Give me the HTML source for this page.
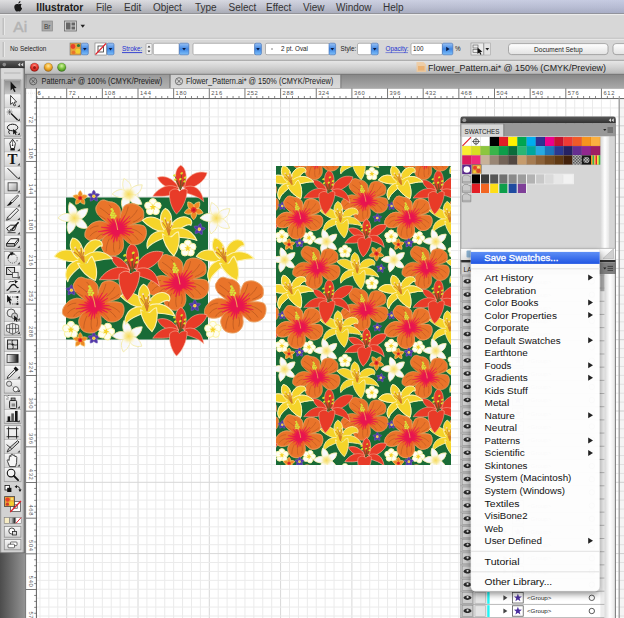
<!DOCTYPE html>
<html><head><meta charset="utf-8"><title>Illustrator</title>
<style>
html,body{margin:0;padding:0}
body{width:624px;height:618px;overflow:hidden;position:relative;background:#fff;font-family:"Liberation Sans","DejaVu Sans",sans-serif;font-size:10px;color:#111}
.abs{position:absolute}
svg{position:absolute;left:0;top:0}
</style></head><body>
<svg width="624" height="618" viewBox="0 0 624 618" font-family="Liberation Sans, DejaVu Sans, sans-serif"><defs><radialGradient id="hibg"><stop offset="0" stop-color="#ee3a22"/><stop offset=".5" stop-color="#ee4322" stop-opacity=".7"/><stop offset="1" stop-color="#ee5a22" stop-opacity="0"/></radialGradient><radialGradient id="hibg2" gradientUnits="userSpaceOnUse" cx="0" cy="0" r="18"><stop offset="0" stop-color="#e8134f"/><stop offset=".7" stop-color="#e8174f"/><stop offset="1" stop-color="#ea2a45" stop-opacity=".85"/></radialGradient><radialGradient id="plg"><stop offset="0" stop-color="#f6d95a"/><stop offset=".45" stop-color="#f9e88f" stop-opacity=".8"/><stop offset="1" stop-color="#fff" stop-opacity="0"/></radialGradient><g id="hib"><path d="M0,0 C-6,-4 -12,-8 -18,-8 C-23,-7.5 -27,-5 -29,-2 C-32,1 -33,5 -32,8 C-30,11 -26,12.5 -22,12 C-17,12 -9,7 0,0Z" fill="#e9742a" stroke="#f4cf94" stroke-width=".7" stroke-linejoin="round"/><path d="M0,0 C3,4 6,8 6,12 C7,17 6,21 3,24 C0,27 -5,27.5 -9,26 C-13,25 -15,21 -16,17 C-17,12 -13,5 0,0Z" fill="#e9742a" stroke="#f4cf94" stroke-width=".7" stroke-linejoin="round"/><path d="M0,0 C8,-4 20,-6 27,-3 C30,0 30,6 27,11 C24,15 18,17 13,15 C8,12 3,6 0,0Z" fill="#e9742a" stroke="#f4cf94" stroke-width=".7" stroke-linejoin="round"/><path d="M0,0 C1,-6 3,-16 7,-23 C11,-26 16,-26 20,-24 C24,-22 27,-19 26.5,-15 C27,-12 26,-9 24,-8 C18,-5 8,-3 0,0Z" fill="#e9742a" stroke="#f4cf94" stroke-width=".7" stroke-linejoin="round"/><path d="M0,0 C-6,-4 -14,-8 -19,-14 C-22,-18 -22,-22 -20,-24 C-18,-28 -16,-29 -13,-29 C-10,-28 -8,-27 -5,-27 C-1,-26 2,-23 3,-20 C4,-14 2,-6 0,0Z" fill="#e9742a" stroke="#f4cf94" stroke-width=".7" stroke-linejoin="round"/><path d="M0,0 C-6,-4 -12,-8 -18,-8 C-23,-7.5 -27,-5 -29,-2 C-32,1 -33,5 -32,8 C-30,11 -26,12.5 -22,12 C-17,12 -9,7 0,0Z" fill="none" stroke="#d9601c" stroke-width=".35"/><path d="M0,0 C3,4 6,8 6,12 C7,17 6,21 3,24 C0,27 -5,27.5 -9,26 C-13,25 -15,21 -16,17 C-17,12 -13,5 0,0Z" fill="none" stroke="#d9601c" stroke-width=".35"/><path d="M0,0 C8,-4 20,-6 27,-3 C30,0 30,6 27,11 C24,15 18,17 13,15 C8,12 3,6 0,0Z" fill="none" stroke="#d9601c" stroke-width=".35"/><path d="M0,0 C1,-6 3,-16 7,-23 C11,-26 16,-26 20,-24 C24,-22 27,-19 26.5,-15 C27,-12 26,-9 24,-8 C18,-5 8,-3 0,0Z" fill="none" stroke="#d9601c" stroke-width=".35"/><path d="M0,0 C-6,-4 -14,-8 -19,-14 C-22,-18 -22,-22 -20,-24 C-18,-28 -16,-29 -13,-29 C-10,-28 -8,-27 -5,-27 C-1,-26 2,-23 3,-20 C4,-14 2,-6 0,0Z" fill="none" stroke="#d9601c" stroke-width=".35"/><path d="M-20,2 C-23,3 -26,5 -27,7" fill="none" stroke="#b4531d" stroke-width=".65" stroke-linecap="round"/><path d="M-15,5 C-18,6 -20,8 -21,10" fill="none" stroke="#b4531d" stroke-width=".65" stroke-linecap="round"/><path d="M-19,-3 C-22,-3 -25,-2 -27,0" fill="none" stroke="#b4531d" stroke-width=".65" stroke-linecap="round"/><path d="M-8,10 C-10,14 -11,18 -11,22" fill="none" stroke="#b4531d" stroke-width=".65" stroke-linecap="round"/><path d="M-3,12 C-4,16 -4,20 -3,23" fill="none" stroke="#b4531d" stroke-width=".65" stroke-linecap="round"/><path d="M2,11 C3,14 3,17 2,20" fill="none" stroke="#b4531d" stroke-width=".65" stroke-linecap="round"/><path d="M12,3 C16,5 19,8 21,11" fill="none" stroke="#b4531d" stroke-width=".65" stroke-linecap="round"/><path d="M15,0 C19,1 22,3 25,6" fill="none" stroke="#b4531d" stroke-width=".65" stroke-linecap="round"/><path d="M8,6 C11,9 13,11 14,13" fill="none" stroke="#b4531d" stroke-width=".65" stroke-linecap="round"/><path d="M12,-10 C15,-12 18,-15 20,-19" fill="none" stroke="#b4531d" stroke-width=".65" stroke-linecap="round"/><path d="M16,-7 C19,-8 22,-10 24,-12" fill="none" stroke="#b4531d" stroke-width=".65" stroke-linecap="round"/><path d="M7,-12 C9,-15 10,-18 11,-22" fill="none" stroke="#b4531d" stroke-width=".65" stroke-linecap="round"/><path d="M-8,-14 C-11,-17 -14,-19 -17,-21" fill="none" stroke="#b4531d" stroke-width=".65" stroke-linecap="round"/><path d="M-3,-16 C-4,-19 -6,-22 -8,-24" fill="none" stroke="#b4531d" stroke-width=".65" stroke-linecap="round"/><path d="M-12,-10 C-15,-12 -17,-13 -19,-14" fill="none" stroke="#b4531d" stroke-width=".65" stroke-linecap="round"/><ellipse rx="17" ry="14" fill="url(#hibg)"/><polygon points="-5.4,-2.6 -8.0,-5.3 -4.6,-3.9 -4.6,-3.9 -9.7,-10.6 -3.5,-4.9 -3.5,-4.9 -7.9,-14.9 -2.1,-5.6 -2.1,-5.6 -3.5,-14.3 -0.7,-6.0 -0.7,-6.0 0.1,-10.5 0.8,-5.9 0.9,-5.9 3.0,-10.8 2.3,-5.5 2.3,-5.5 7.7,-13.5 3.6,-4.8 3.6,-4.8 12.5,-12.9 4.7,-3.8 4.7,-3.8 13.2,-8.2 5.5,-2.5 5.5,-2.5 9.6,-3.0 5.9,-1.1 5.5,-2.4 10.1,-3.0 5.9,-1.0 5.9,-1.0 14.7,-0.6 6.0,0.5 6.0,0.5 16.6,3.5 5.7,2.0 5.7,2.0 12.9,6.4 5.0,3.3 5.0,3.3 7.6,6.5 4.0,4.4 2.0,5.6 1.7,7.7 0.6,6.0 0.6,6.0 -0.4,12.3 -0.9,5.9 -0.9,5.9 -3.9,13.4 -2.4,5.5 -2.4,5.5 -6.1,10.4 -3.7,4.8 -3.7,4.8 -5.4,5.4 -4.7,3.7 -4.3,4.2 -9.0,6.7 -5.2,3.0 -5.2,3.0 -14.9,6.1 -5.8,1.6 -5.8,1.6 -19.1,2.7 -6.0,0.1 -6.0,0.1 -16.1,-1.8 -5.8,-1.4 -5.8,-1.4 -10.3,-3.9 -5.3,-2.8" fill="url(#hibg2)" stroke="#e8174f" stroke-width=".5" stroke-linejoin="round"/><path d="M0.5,1 C0,-4 -1.5,-8 -2.8,-11.5" stroke="#eea052" stroke-width="1.1" fill="none"/><circle cx="-3" cy="-11.5" r="1.25" fill="#dbe23a"/><circle cx="-5.5" cy="-11.5" r="1.25" fill="#dbe23a"/><circle cx="-1.8" cy="-13.2" r="1.25" fill="#dbe23a"/><circle cx="-4.3" cy="-13.6" r="1.25" fill="#dbe23a"/><circle cx="-6.2" cy="-13.8" r="1.25" fill="#dbe23a"/><circle cx="-3.2" cy="-15.6" r="1.25" fill="#dbe23a"/><circle cx="-5.4" cy="-16" r="1.25" fill="#dbe23a"/><circle cx="-4.4" cy="-18" r="1.25" fill="#dbe23a"/><circle cx="-5.4" cy="-19.8" r="1.25" fill="#dbe23a"/></g><g id="yl"><path d="M-3,0 C-10,-1 -19,-5 -25.5,-12 C-18,-18.5 -7,-15 -1,-5Z" fill="#f5d42a" stroke="#fcf2b4" stroke-width="1.1" stroke-linejoin="round"/><path d="M1,-3 C5,-13 14,-18 20.5,-14.5 C23.5,-13.5 25,-10 23,-7 C20.5,-10.5 13,-3.5 4,1Z" fill="#f5d42a" stroke="#fcf2b4" stroke-width="1.1" stroke-linejoin="round"/><path d="M-2,-1 C-8,-2.5 -16,0 -19,6 C-21,9 -21.5,12 -20.5,16 C-17,10 -10,8.5 -3,5Z" fill="#f5d42a" stroke="#fcf2b4" stroke-width="1.1" stroke-linejoin="round"/><path d="M2,-2 C10,-6.5 23,-5 29,8 C22,5 12,5.5 4,4Z" fill="#f5d42a" stroke="#fcf2b4" stroke-width="1.1" stroke-linejoin="round"/><path d="M-4,-3 C-9,-10 -8.5,-20 -2.5,-24 C4,-21 5,-12 3,-4Z" fill="#f5d42a" stroke="#fcf2b4" stroke-width="1.1" stroke-linejoin="round"/><path d="M-5.5,1.5 C-2,3 2,5 4,4 C6,2 8,-0.5 10.5,-0.5 C12.5,8 10.5,18 6,23.5 C0,18 -4.5,10 -5.5,1.5Z" fill="#f5d42a" stroke="#fcf2b4" stroke-width="1.1" stroke-linejoin="round"/><circle cx="0.5" cy="0" r="4.5" fill="#f5d42a"/><path d="M1,2 Q-1.8,-6.6 -6,-11" stroke="#cf7a2b" stroke-width="1" fill="none"/><path d="M1,2 Q-0.9,-8.4 -3,-14" stroke="#cf7a2b" stroke-width="1" fill="none"/><path d="M1,2 Q0.0,-6.0 0,-10" stroke="#cf7a2b" stroke-width="1" fill="none"/><path d="M1,2 Q0.9,-7.8 3,-13" stroke="#cf7a2b" stroke-width="1" fill="none"/><path d="M1,2 Q1.3,-4.8 4.5,-8" stroke="#cf7a2b" stroke-width="1" fill="none"/><path d="M-1,-3 L3,-3 L1.5,3 L0.5,3Z" fill="#cf7a2b"/><circle cx="-6" cy="-11" r="1.1" fill="#f6dcb4"/><circle cx="-3" cy="-14" r="1.1" fill="#f6dcb4"/><circle cx="0" cy="-10" r="1.1" fill="#f6dcb4"/><circle cx="3" cy="-13" r="1.1" fill="#f6dcb4"/><circle cx="4.5" cy="-8" r="1.1" fill="#f6dcb4"/></g><g id="rl"><path d="M-3,-2 C-9,-12 -19,-17 -28,-13.5 C-25,-5 -14,0 -4,2Z" fill="#e83b28" stroke="#f8b9a0" stroke-width=".7" stroke-linejoin="round"/><path d="M2,-3 C7,-15 18,-23 30.5,-19 C28,-9 17,-2 5,1Z" fill="#e83b28" stroke="#f8b9a0" stroke-width=".7" stroke-linejoin="round"/><path d="M-3,-1 C-12,-7 -25,-4 -33.5,8.5 C-26,8 -18,10 -8,6Z" fill="#e83b28" stroke="#f8b9a0" stroke-width=".7" stroke-linejoin="round"/><path d="M4,-2 C13,-6 24,-2 26.5,15 C21,9 13,7 4,4Z" fill="#e83b28" stroke="#f8b9a0" stroke-width=".7" stroke-linejoin="round"/><path d="M-4,-2 C-8,-12 -8,-24 -0.5,-28 C7,-24 7,-12 4,-3Z" fill="#e83b28" stroke="#f8b9a0" stroke-width=".7" stroke-linejoin="round"/><path d="M-13.5,3 C-9,-1 -5,-1 -2,2.5 C1,0 4,-1 7,1 C7,12 1,24 -5.5,29.5 C-11,24 -15,12 -13.5,3Z" fill="#e83b28" stroke="#f8b9a0" stroke-width=".7" stroke-linejoin="round"/><path d="M-1,1 Q-3.2,-8.0 -8,-16" stroke="#6a5320" stroke-width=".9" fill="none"/><path d="M-1,1 Q-2.8,-5.5 -7,-11" stroke="#6a5320" stroke-width=".9" fill="none"/><path d="M-1,1 Q0.2,-9.2 0.5,-18.5" stroke="#6a5320" stroke-width=".9" fill="none"/><path d="M-1,1 Q-0.4,-5.8 -1,-11.5" stroke="#6a5320" stroke-width=".9" fill="none"/><path d="M-1,1 Q1.8,-6.8 4.5,-13.5" stroke="#6a5320" stroke-width=".9" fill="none"/><path d="M-1,1 Q1.6,-4.5 4,-9" stroke="#6a5320" stroke-width=".9" fill="none"/><ellipse cx="-8" cy="-16" rx="1.7" ry="1.2" fill="#dbe12c" transform="rotate(-30 -8 -16)"/><ellipse cx="-7" cy="-11" rx="1.7" ry="1.2" fill="#dbe12c" transform="rotate(-30 -7 -11)"/><ellipse cx="0.5" cy="-18.5" rx="1.7" ry="1.2" fill="#dbe12c" transform="rotate(-30 0.5 -18.5)"/><ellipse cx="-1" cy="-11.5" rx="1.7" ry="1.2" fill="#dbe12c" transform="rotate(-30 -1 -11.5)"/><ellipse cx="4.5" cy="-13.5" rx="1.7" ry="1.2" fill="#dbe12c" transform="rotate(-30 4.5 -13.5)"/><ellipse cx="4" cy="-9" rx="1.7" ry="1.2" fill="#dbe12c" transform="rotate(-30 4 -9)"/></g><g id="rls"><path d="M-3,-2 C-8,-11 -15,-16 -22,-15 C-20,-7 -13,-1 -4,2Z" fill="#e83b28" stroke="#f8b9a0" stroke-width=".7" stroke-linejoin="round"/><path d="M2,-3 C7,-15 18,-23 30.5,-19 C28,-9 17,-2 5,1Z" fill="#e83b28" stroke="#f8b9a0" stroke-width=".7" stroke-linejoin="round"/><path d="M-3,-1 C-12,-7 -25,-4 -33.5,8.5 C-26,8 -18,10 -8,6Z" fill="#e83b28" stroke="#f8b9a0" stroke-width=".7" stroke-linejoin="round"/><path d="M4,-2 C13,-6 24,-2 26.5,15 C21,9 13,7 4,4Z" fill="#e83b28" stroke="#f8b9a0" stroke-width=".7" stroke-linejoin="round"/><path d="M-4,-2 C-8,-12 -8,-24 -0.5,-28 C7,-24 7,-12 4,-3Z" fill="#e83b28" stroke="#f8b9a0" stroke-width=".7" stroke-linejoin="round"/><path d="M-13.5,3 C-9,-1 -5,-1 -2,2.5 C1,0 4,-1 7,1 C7,12 1,24 -5.5,29.5 C-11,24 -15,12 -13.5,3Z" fill="#e83b28" stroke="#f8b9a0" stroke-width=".7" stroke-linejoin="round"/><path d="M-1,1 Q-3.2,-8.0 -8,-16" stroke="#6a5320" stroke-width=".9" fill="none"/><path d="M-1,1 Q-2.8,-5.5 -7,-11" stroke="#6a5320" stroke-width=".9" fill="none"/><path d="M-1,1 Q0.2,-9.2 0.5,-18.5" stroke="#6a5320" stroke-width=".9" fill="none"/><path d="M-1,1 Q-0.4,-5.8 -1,-11.5" stroke="#6a5320" stroke-width=".9" fill="none"/><path d="M-1,1 Q1.8,-6.8 4.5,-13.5" stroke="#6a5320" stroke-width=".9" fill="none"/><path d="M-1,1 Q1.6,-4.5 4,-9" stroke="#6a5320" stroke-width=".9" fill="none"/><ellipse cx="-8" cy="-16" rx="1.7" ry="1.2" fill="#dbe12c" transform="rotate(-30 -8 -16)"/><ellipse cx="-7" cy="-11" rx="1.7" ry="1.2" fill="#dbe12c" transform="rotate(-30 -7 -11)"/><ellipse cx="0.5" cy="-18.5" rx="1.7" ry="1.2" fill="#dbe12c" transform="rotate(-30 0.5 -18.5)"/><ellipse cx="-1" cy="-11.5" rx="1.7" ry="1.2" fill="#dbe12c" transform="rotate(-30 -1 -11.5)"/><ellipse cx="4.5" cy="-13.5" rx="1.7" ry="1.2" fill="#dbe12c" transform="rotate(-30 4.5 -13.5)"/><ellipse cx="4" cy="-9" rx="1.7" ry="1.2" fill="#dbe12c" transform="rotate(-30 4 -9)"/></g><g id="pl"><path transform="rotate(-3)" d="M0,0 C-5.2,-3 -7,-9 -4,-16 C1.5,-13 6,-7 0,0Z" fill="#f8f8fc" stroke="#f3eaa6" stroke-width=".8" stroke-linejoin="round"/><path transform="rotate(69)" d="M0,0 C-5.2,-3 -7,-9 -4,-16 C1.5,-13 6,-7 0,0Z" fill="#f8f8fc" stroke="#f3eaa6" stroke-width=".8" stroke-linejoin="round"/><path transform="rotate(141)" d="M0,0 C-5.2,-3 -7,-9 -4,-16 C1.5,-13 6,-7 0,0Z" fill="#f8f8fc" stroke="#f3eaa6" stroke-width=".8" stroke-linejoin="round"/><path transform="rotate(213)" d="M0,0 C-5.2,-3 -7,-9 -4,-16 C1.5,-13 6,-7 0,0Z" fill="#f8f8fc" stroke="#f3eaa6" stroke-width=".8" stroke-linejoin="round"/><path transform="rotate(285)" d="M0,0 C-5.2,-3 -7,-9 -4,-16 C1.5,-13 6,-7 0,0Z" fill="#f8f8fc" stroke="#f3eaa6" stroke-width=".8" stroke-linejoin="round"/><circle r="9" fill="url(#plg)"/></g><g id="sy"><circle cx="0.00" cy="-4.90" r="3.6" fill="#fffef2" stroke="#fbf3a0" stroke-width="1"/><circle cx="4.66" cy="-1.51" r="3.6" fill="#fffef2" stroke="#fbf3a0" stroke-width="1"/><circle cx="2.88" cy="3.96" r="3.6" fill="#fffef2" stroke="#fbf3a0" stroke-width="1"/><circle cx="-2.88" cy="3.96" r="3.6" fill="#fffef2" stroke="#fbf3a0" stroke-width="1"/><circle cx="-4.66" cy="-1.51" r="3.6" fill="#fffef2" stroke="#fbf3a0" stroke-width="1"/><circle r="2" fill="#fffef2"/><polygon points="0.00,-3.60 0.88,-1.21 3.42,-1.11 1.43,0.46 2.12,2.91 0.00,1.50 -2.12,2.91 -1.43,0.46 -3.42,-1.11 -0.88,-1.21" fill="#f6d32a"/></g><g id="so"><path transform="rotate(0)" d="M0,0 C-3,-2 -2.8,-5 0,-7.6 C2.8,-5 3,-2 0,0Z" fill="#ee8a23" stroke="#f6cf7a" stroke-width=".6"/><path transform="rotate(72)" d="M0,0 C-3,-2 -2.8,-5 0,-7.6 C2.8,-5 3,-2 0,0Z" fill="#ee8a23" stroke="#f6cf7a" stroke-width=".6"/><path transform="rotate(144)" d="M0,0 C-3,-2 -2.8,-5 0,-7.6 C2.8,-5 3,-2 0,0Z" fill="#ee8a23" stroke="#f6cf7a" stroke-width=".6"/><path transform="rotate(216)" d="M0,0 C-3,-2 -2.8,-5 0,-7.6 C2.8,-5 3,-2 0,0Z" fill="#ee8a23" stroke="#f6cf7a" stroke-width=".6"/><path transform="rotate(288)" d="M0,0 C-3,-2 -2.8,-5 0,-7.6 C2.8,-5 3,-2 0,0Z" fill="#ee8a23" stroke="#f6cf7a" stroke-width=".6"/><circle r="2.2" fill="#e2342a"/><circle r="1" fill="#c4122f"/></g><g id="sp"><path transform="rotate(0)" d="M0,0 C-3,-2 -2.8,-5 0,-7.6 C2.8,-5 3,-2 0,0Z" fill="#5238a6" stroke="#7a63c0" stroke-width=".6"/><path transform="rotate(72)" d="M0,0 C-3,-2 -2.8,-5 0,-7.6 C2.8,-5 3,-2 0,0Z" fill="#5238a6" stroke="#7a63c0" stroke-width=".6"/><path transform="rotate(144)" d="M0,0 C-3,-2 -2.8,-5 0,-7.6 C2.8,-5 3,-2 0,0Z" fill="#5238a6" stroke="#7a63c0" stroke-width=".6"/><path transform="rotate(216)" d="M0,0 C-3,-2 -2.8,-5 0,-7.6 C2.8,-5 3,-2 0,0Z" fill="#5238a6" stroke="#7a63c0" stroke-width=".6"/><path transform="rotate(288)" d="M0,0 C-3,-2 -2.8,-5 0,-7.6 C2.8,-5 3,-2 0,0Z" fill="#5238a6" stroke="#7a63c0" stroke-width=".6"/><circle r="2.2" fill="#f7dc55"/><circle r="1" fill="#f2b233"/></g><g id="fl"><use href="#so" transform="translate(14.2,0.6)"/><use href="#so" transform="translate(14.2,142.6)"/><use href="#so" transform="translate(127.7,12.4) rotate(36) scale(1.3)"/><use href="#sp" transform="translate(27.8,-1.3) scale(0.8)"/><use href="#sp" transform="translate(27.8,140.7) scale(0.8)"/><use href="#sp" transform="translate(133.4,31.7) rotate(10) scale(0.8)"/><use href="#sp" transform="translate(5.4,92.7) scale(0.75)"/><use href="#sp" transform="translate(128.8,108.2) scale(0.8)"/><use href="#sy" transform="translate(86.9,9.6)"/><use href="#sy" transform="translate(121.8,50.9)"/><use href="#sy" transform="translate(4.9,132.3)"/><use href="#sy" transform="translate(146.9,132.3)"/><use href="#sy" transform="translate(40.0,134.0) rotate(20)"/><use href="#pl" transform="translate(8.4,20.7)"/><use href="#pl" transform="translate(150.4,20.7)"/><use href="#pl" transform="translate(62.7,-3.2)"/><use href="#pl" transform="translate(62.7,138.8)"/><use href="#hib" transform="translate(113.5,86.0)"/><use href="#hib" transform="translate(28.8,108.7)"/><use href="#hib" transform="translate(170.8,108.7)"/><use href="#yl" transform="translate(80.0,110.7)"/><use href="#rls" transform="translate(66.8,73.8)"/><use href="#hib" transform="translate(51.2,31.5)"/><use href="#yl" transform="translate(16.3,62.6) rotate(-18)"/><use href="#yl" transform="translate(158.3,62.6) rotate(-18)"/><use href="#yl" transform="translate(101.9,34.9)"/><use href="#rl" transform="translate(115.2,-8.5) scale(0.85)"/><use href="#rl" transform="translate(115.2,133.5) scale(0.85)"/></g></defs><line x1="39.96" y1="98" x2="39.96" y2="618" stroke="#ebebeb" stroke-width="1"/><line x1="48.88" y1="98" x2="48.88" y2="618" stroke="#ebebeb" stroke-width="1"/><line x1="57.79" y1="98" x2="57.79" y2="618" stroke="#ebebeb" stroke-width="1"/><line x1="66.70" y1="98" x2="66.70" y2="618" stroke="#d8d8d8" stroke-width="1"/><line x1="75.61" y1="98" x2="75.61" y2="618" stroke="#ebebeb" stroke-width="1"/><line x1="84.53" y1="98" x2="84.53" y2="618" stroke="#ebebeb" stroke-width="1"/><line x1="93.44" y1="98" x2="93.44" y2="618" stroke="#ebebeb" stroke-width="1"/><line x1="102.35" y1="98" x2="102.35" y2="618" stroke="#ebebeb" stroke-width="1"/><line x1="111.26" y1="98" x2="111.26" y2="618" stroke="#ebebeb" stroke-width="1"/><line x1="120.17" y1="98" x2="120.17" y2="618" stroke="#ebebeb" stroke-width="1"/><line x1="129.09" y1="98" x2="129.09" y2="618" stroke="#ebebeb" stroke-width="1"/><line x1="138.00" y1="98" x2="138.00" y2="618" stroke="#d8d8d8" stroke-width="1"/><line x1="146.91" y1="98" x2="146.91" y2="618" stroke="#ebebeb" stroke-width="1"/><line x1="155.82" y1="98" x2="155.82" y2="618" stroke="#ebebeb" stroke-width="1"/><line x1="164.74" y1="98" x2="164.74" y2="618" stroke="#ebebeb" stroke-width="1"/><line x1="173.65" y1="98" x2="173.65" y2="618" stroke="#ebebeb" stroke-width="1"/><line x1="182.56" y1="98" x2="182.56" y2="618" stroke="#ebebeb" stroke-width="1"/><line x1="191.47" y1="98" x2="191.47" y2="618" stroke="#ebebeb" stroke-width="1"/><line x1="200.39" y1="98" x2="200.39" y2="618" stroke="#ebebeb" stroke-width="1"/><line x1="209.30" y1="98" x2="209.30" y2="618" stroke="#d8d8d8" stroke-width="1"/><line x1="218.21" y1="98" x2="218.21" y2="618" stroke="#ebebeb" stroke-width="1"/><line x1="227.12" y1="98" x2="227.12" y2="618" stroke="#ebebeb" stroke-width="1"/><line x1="236.04" y1="98" x2="236.04" y2="618" stroke="#ebebeb" stroke-width="1"/><line x1="244.95" y1="98" x2="244.95" y2="618" stroke="#ebebeb" stroke-width="1"/><line x1="253.86" y1="98" x2="253.86" y2="618" stroke="#ebebeb" stroke-width="1"/><line x1="262.77" y1="98" x2="262.77" y2="618" stroke="#ebebeb" stroke-width="1"/><line x1="271.69" y1="98" x2="271.69" y2="618" stroke="#ebebeb" stroke-width="1"/><line x1="280.60" y1="98" x2="280.60" y2="618" stroke="#d8d8d8" stroke-width="1"/><line x1="289.51" y1="98" x2="289.51" y2="618" stroke="#ebebeb" stroke-width="1"/><line x1="298.43" y1="98" x2="298.43" y2="618" stroke="#ebebeb" stroke-width="1"/><line x1="307.34" y1="98" x2="307.34" y2="618" stroke="#ebebeb" stroke-width="1"/><line x1="316.25" y1="98" x2="316.25" y2="618" stroke="#ebebeb" stroke-width="1"/><line x1="325.16" y1="98" x2="325.16" y2="618" stroke="#ebebeb" stroke-width="1"/><line x1="334.07" y1="98" x2="334.07" y2="618" stroke="#ebebeb" stroke-width="1"/><line x1="342.99" y1="98" x2="342.99" y2="618" stroke="#ebebeb" stroke-width="1"/><line x1="351.90" y1="98" x2="351.90" y2="618" stroke="#d8d8d8" stroke-width="1"/><line x1="360.81" y1="98" x2="360.81" y2="618" stroke="#ebebeb" stroke-width="1"/><line x1="369.72" y1="98" x2="369.72" y2="618" stroke="#ebebeb" stroke-width="1"/><line x1="378.64" y1="98" x2="378.64" y2="618" stroke="#ebebeb" stroke-width="1"/><line x1="387.55" y1="98" x2="387.55" y2="618" stroke="#ebebeb" stroke-width="1"/><line x1="396.46" y1="98" x2="396.46" y2="618" stroke="#ebebeb" stroke-width="1"/><line x1="405.38" y1="98" x2="405.38" y2="618" stroke="#ebebeb" stroke-width="1"/><line x1="414.29" y1="98" x2="414.29" y2="618" stroke="#ebebeb" stroke-width="1"/><line x1="423.20" y1="98" x2="423.20" y2="618" stroke="#d8d8d8" stroke-width="1"/><line x1="432.11" y1="98" x2="432.11" y2="618" stroke="#ebebeb" stroke-width="1"/><line x1="441.02" y1="98" x2="441.02" y2="618" stroke="#ebebeb" stroke-width="1"/><line x1="449.94" y1="98" x2="449.94" y2="618" stroke="#ebebeb" stroke-width="1"/><line x1="458.85" y1="98" x2="458.85" y2="618" stroke="#ebebeb" stroke-width="1"/><line x1="467.76" y1="98" x2="467.76" y2="618" stroke="#ebebeb" stroke-width="1"/><line x1="476.67" y1="98" x2="476.67" y2="618" stroke="#ebebeb" stroke-width="1"/><line x1="485.59" y1="98" x2="485.59" y2="618" stroke="#ebebeb" stroke-width="1"/><line x1="494.50" y1="98" x2="494.50" y2="618" stroke="#d8d8d8" stroke-width="1"/><line x1="503.41" y1="98" x2="503.41" y2="618" stroke="#ebebeb" stroke-width="1"/><line x1="512.33" y1="98" x2="512.33" y2="618" stroke="#ebebeb" stroke-width="1"/><line x1="521.24" y1="98" x2="521.24" y2="618" stroke="#ebebeb" stroke-width="1"/><line x1="530.15" y1="98" x2="530.15" y2="618" stroke="#ebebeb" stroke-width="1"/><line x1="539.06" y1="98" x2="539.06" y2="618" stroke="#ebebeb" stroke-width="1"/><line x1="547.98" y1="98" x2="547.98" y2="618" stroke="#ebebeb" stroke-width="1"/><line x1="556.89" y1="98" x2="556.89" y2="618" stroke="#ebebeb" stroke-width="1"/><line x1="565.80" y1="98" x2="565.80" y2="618" stroke="#d8d8d8" stroke-width="1"/><line x1="574.71" y1="98" x2="574.71" y2="618" stroke="#ebebeb" stroke-width="1"/><line x1="583.62" y1="98" x2="583.62" y2="618" stroke="#ebebeb" stroke-width="1"/><line x1="592.54" y1="98" x2="592.54" y2="618" stroke="#ebebeb" stroke-width="1"/><line x1="601.45" y1="98" x2="601.45" y2="618" stroke="#ebebeb" stroke-width="1"/><line x1="610.36" y1="98" x2="610.36" y2="618" stroke="#ebebeb" stroke-width="1"/><line x1="619.27" y1="98" x2="619.27" y2="618" stroke="#ebebeb" stroke-width="1"/><line x1="36" y1="99.06" x2="624" y2="99.06" stroke="#ebebeb" stroke-width="1"/><line x1="36" y1="107.97" x2="624" y2="107.97" stroke="#ebebeb" stroke-width="1"/><line x1="36" y1="116.89" x2="624" y2="116.89" stroke="#ebebeb" stroke-width="1"/><line x1="36" y1="125.80" x2="624" y2="125.80" stroke="#d8d8d8" stroke-width="1"/><line x1="36" y1="134.71" x2="624" y2="134.71" stroke="#ebebeb" stroke-width="1"/><line x1="36" y1="143.62" x2="624" y2="143.62" stroke="#ebebeb" stroke-width="1"/><line x1="36" y1="152.54" x2="624" y2="152.54" stroke="#ebebeb" stroke-width="1"/><line x1="36" y1="161.45" x2="624" y2="161.45" stroke="#ebebeb" stroke-width="1"/><line x1="36" y1="170.36" x2="624" y2="170.36" stroke="#ebebeb" stroke-width="1"/><line x1="36" y1="179.27" x2="624" y2="179.27" stroke="#ebebeb" stroke-width="1"/><line x1="36" y1="188.19" x2="624" y2="188.19" stroke="#ebebeb" stroke-width="1"/><line x1="36" y1="197.10" x2="624" y2="197.10" stroke="#d8d8d8" stroke-width="1"/><line x1="36" y1="206.01" x2="624" y2="206.01" stroke="#ebebeb" stroke-width="1"/><line x1="36" y1="214.93" x2="624" y2="214.93" stroke="#ebebeb" stroke-width="1"/><line x1="36" y1="223.84" x2="624" y2="223.84" stroke="#ebebeb" stroke-width="1"/><line x1="36" y1="232.75" x2="624" y2="232.75" stroke="#ebebeb" stroke-width="1"/><line x1="36" y1="241.66" x2="624" y2="241.66" stroke="#ebebeb" stroke-width="1"/><line x1="36" y1="250.57" x2="624" y2="250.57" stroke="#ebebeb" stroke-width="1"/><line x1="36" y1="259.49" x2="624" y2="259.49" stroke="#ebebeb" stroke-width="1"/><line x1="36" y1="268.40" x2="624" y2="268.40" stroke="#d8d8d8" stroke-width="1"/><line x1="36" y1="277.31" x2="624" y2="277.31" stroke="#ebebeb" stroke-width="1"/><line x1="36" y1="286.22" x2="624" y2="286.22" stroke="#ebebeb" stroke-width="1"/><line x1="36" y1="295.14" x2="624" y2="295.14" stroke="#ebebeb" stroke-width="1"/><line x1="36" y1="304.05" x2="624" y2="304.05" stroke="#ebebeb" stroke-width="1"/><line x1="36" y1="312.96" x2="624" y2="312.96" stroke="#ebebeb" stroke-width="1"/><line x1="36" y1="321.88" x2="624" y2="321.88" stroke="#ebebeb" stroke-width="1"/><line x1="36" y1="330.79" x2="624" y2="330.79" stroke="#ebebeb" stroke-width="1"/><line x1="36" y1="339.70" x2="624" y2="339.70" stroke="#d8d8d8" stroke-width="1"/><line x1="36" y1="348.61" x2="624" y2="348.61" stroke="#ebebeb" stroke-width="1"/><line x1="36" y1="357.52" x2="624" y2="357.52" stroke="#ebebeb" stroke-width="1"/><line x1="36" y1="366.44" x2="624" y2="366.44" stroke="#ebebeb" stroke-width="1"/><line x1="36" y1="375.35" x2="624" y2="375.35" stroke="#ebebeb" stroke-width="1"/><line x1="36" y1="384.26" x2="624" y2="384.26" stroke="#ebebeb" stroke-width="1"/><line x1="36" y1="393.18" x2="624" y2="393.18" stroke="#ebebeb" stroke-width="1"/><line x1="36" y1="402.09" x2="624" y2="402.09" stroke="#ebebeb" stroke-width="1"/><line x1="36" y1="411.00" x2="624" y2="411.00" stroke="#d8d8d8" stroke-width="1"/><line x1="36" y1="419.91" x2="624" y2="419.91" stroke="#ebebeb" stroke-width="1"/><line x1="36" y1="428.82" x2="624" y2="428.82" stroke="#ebebeb" stroke-width="1"/><line x1="36" y1="437.74" x2="624" y2="437.74" stroke="#ebebeb" stroke-width="1"/><line x1="36" y1="446.65" x2="624" y2="446.65" stroke="#ebebeb" stroke-width="1"/><line x1="36" y1="455.56" x2="624" y2="455.56" stroke="#ebebeb" stroke-width="1"/><line x1="36" y1="464.48" x2="624" y2="464.48" stroke="#ebebeb" stroke-width="1"/><line x1="36" y1="473.39" x2="624" y2="473.39" stroke="#ebebeb" stroke-width="1"/><line x1="36" y1="482.30" x2="624" y2="482.30" stroke="#d8d8d8" stroke-width="1"/><line x1="36" y1="491.21" x2="624" y2="491.21" stroke="#ebebeb" stroke-width="1"/><line x1="36" y1="500.12" x2="624" y2="500.12" stroke="#ebebeb" stroke-width="1"/><line x1="36" y1="509.04" x2="624" y2="509.04" stroke="#ebebeb" stroke-width="1"/><line x1="36" y1="517.95" x2="624" y2="517.95" stroke="#ebebeb" stroke-width="1"/><line x1="36" y1="526.86" x2="624" y2="526.86" stroke="#ebebeb" stroke-width="1"/><line x1="36" y1="535.77" x2="624" y2="535.77" stroke="#ebebeb" stroke-width="1"/><line x1="36" y1="544.69" x2="624" y2="544.69" stroke="#ebebeb" stroke-width="1"/><line x1="36" y1="553.60" x2="624" y2="553.60" stroke="#d8d8d8" stroke-width="1"/><line x1="36" y1="562.51" x2="624" y2="562.51" stroke="#ebebeb" stroke-width="1"/><line x1="36" y1="571.42" x2="624" y2="571.42" stroke="#ebebeb" stroke-width="1"/><line x1="36" y1="580.34" x2="624" y2="580.34" stroke="#ebebeb" stroke-width="1"/><line x1="36" y1="589.25" x2="624" y2="589.25" stroke="#ebebeb" stroke-width="1"/><line x1="36" y1="598.16" x2="624" y2="598.16" stroke="#ebebeb" stroke-width="1"/><line x1="36" y1="607.07" x2="624" y2="607.07" stroke="#ebebeb" stroke-width="1"/><line x1="36" y1="615.99" x2="624" y2="615.99" stroke="#ebebeb" stroke-width="1"/><g transform="translate(66.0,197.5)"><rect width="142.0" height="142.0" fill="#196b36"/><use href="#fl"/></g><clipPath id="rc"><rect x="276" y="166" width="175" height="299"/></clipPath><g clip-path="url(#rc)"><rect x="276" y="166" width="175" height="299" fill="#196b36"/><use href="#fl" transform="translate(168.76,25.36) scale(0.77)"/><use href="#fl" transform="translate(278.10,25.36) scale(0.77)"/><use href="#fl" transform="translate(387.44,25.36) scale(0.77)"/><use href="#fl" transform="translate(496.78,25.36) scale(0.77)"/><use href="#fl" transform="translate(168.76,134.70) scale(0.77)"/><use href="#fl" transform="translate(278.10,134.70) scale(0.77)"/><use href="#fl" transform="translate(387.44,134.70) scale(0.77)"/><use href="#fl" transform="translate(496.78,134.70) scale(0.77)"/><use href="#fl" transform="translate(168.76,244.04) scale(0.77)"/><use href="#fl" transform="translate(278.10,244.04) scale(0.77)"/><use href="#fl" transform="translate(387.44,244.04) scale(0.77)"/><use href="#fl" transform="translate(496.78,244.04) scale(0.77)"/><use href="#fl" transform="translate(168.76,353.38) scale(0.77)"/><use href="#fl" transform="translate(278.10,353.38) scale(0.77)"/><use href="#fl" transform="translate(387.44,353.38) scale(0.77)"/><use href="#fl" transform="translate(496.78,353.38) scale(0.77)"/><use href="#fl" transform="translate(168.76,462.72) scale(0.77)"/><use href="#fl" transform="translate(278.10,462.72) scale(0.77)"/><use href="#fl" transform="translate(387.44,462.72) scale(0.77)"/><use href="#fl" transform="translate(496.78,462.72) scale(0.77)"/><use href="#fl" transform="translate(168.76,572.06) scale(0.77)"/><use href="#fl" transform="translate(278.10,572.06) scale(0.77)"/><use href="#fl" transform="translate(387.44,572.06) scale(0.77)"/><use href="#fl" transform="translate(496.78,572.06) scale(0.77)"/></g><defs><linearGradient id="mbg" x1="0" y1="0" x2="0" y2="1"><stop offset="0" stop-color="#dedee0"/><stop offset=".5" stop-color="#c6c6c9"/><stop offset="1" stop-color="#a6a7ab"/></linearGradient><linearGradient id="mbt" x1="0" y1="0" x2="1" y2="0"><stop offset=".15" stop-color="#a4b0e4" stop-opacity="0"/><stop offset=".6" stop-color="#a4b0e4" stop-opacity=".3"/><stop offset="1" stop-color="#a4b0e4" stop-opacity=".42"/></linearGradient><linearGradient id="tbg" x1="0" y1="0" x2="0" y2="1"><stop offset="0" stop-color="#e9e9e9"/><stop offset=".5" stop-color="#d2d2d2"/><stop offset="1" stop-color="#b6b6b6"/></linearGradient><linearGradient id="tabg" x1="0" y1="0" x2="0" y2="1"><stop offset="0" stop-color="#858585"/><stop offset="1" stop-color="#a8a8a8"/></linearGradient><linearGradient id="tabi" x1="0" y1="0" x2="0" y2="1"><stop offset="0" stop-color="#9a9a9a"/><stop offset="1" stop-color="#b0b0b0"/></linearGradient><linearGradient id="taba" x1="0" y1="0" x2="0" y2="1"><stop offset="0" stop-color="#cdcdcd"/><stop offset="1" stop-color="#dadada"/></linearGradient><linearGradient id="btn" x1="0" y1="0" x2="0" y2="1"><stop offset="0" stop-color="#f6f6f6"/><stop offset="1" stop-color="#d4d4d4"/></linearGradient><linearGradient id="btnsel" x1="0" y1="0" x2="0" y2="1"><stop offset="0" stop-color="#8e8e8e"/><stop offset="1" stop-color="#c4c4c4"/></linearGradient><linearGradient id="blue" x1="0" y1="0" x2="0" y2="1"><stop offset="0" stop-color="#9cc4f4"/><stop offset=".5" stop-color="#3f86e4"/><stop offset="1" stop-color="#7fc0f8"/></linearGradient><linearGradient id="hl" x1="0" y1="0" x2="0" y2="1"><stop offset="0" stop-color="#5e8ff6"/><stop offset="1" stop-color="#1f55e2"/></linearGradient><linearGradient id="dk" x1="0" y1="0" x2="1" y2="0"><stop offset="0" stop-color="#4c4c4c"/><stop offset="1" stop-color="#949494"/></linearGradient><linearGradient id="wbtn" x1="0" y1="0" x2="0" y2="1"><stop offset="0" stop-color="#ffffff"/><stop offset="1" stop-color="#e2e2e2"/></linearGradient><linearGradient id="hdr" x1="0" y1="0" x2="0" y2="1"><stop offset="0" stop-color="#5a5a5a"/><stop offset="1" stop-color="#2e2e2e"/></linearGradient><linearGradient id="scr" x1="0" y1="0" x2="1" y2="0"><stop offset="0" stop-color="#d8d8d8"/><stop offset=".5" stop-color="#ffffff"/><stop offset="1" stop-color="#e4e4e4"/></linearGradient><radialGradient id="rd" cx=".5" cy=".35" r=".65"><stop offset="0" stop-color="#ff9a8a"/><stop offset=".5" stop-color="#ee3a30"/><stop offset="1" stop-color="#a81810"/></radialGradient><radialGradient id="yw" cx=".5" cy=".35" r=".65"><stop offset="0" stop-color="#ffe9a0"/><stop offset=".5" stop-color="#f3b030"/><stop offset="1" stop-color="#b87410"/></radialGradient><radialGradient id="gn" cx=".5" cy=".35" r=".65"><stop offset="0" stop-color="#d4f4a0"/><stop offset=".5" stop-color="#7cc440"/><stop offset="1" stop-color="#3c8418"/></radialGradient><filter id="sh" x="-10%" y="-5%" width="120%" height="112%"><feGaussianBlur in="SourceAlpha" stdDeviation="3"/><feOffset dy="3"/><feComponentTransfer><feFuncA type="linear" slope=".45"/></feComponentTransfer><feMerge><feMergeNode/><feMergeNode in="SourceGraphic"/></feMerge></filter></defs><pattern id="dots" width="1.5" height="1.5" patternUnits="userSpaceOnUse"><rect width=".75" height=".75" fill="#222"/><rect x=".75" y=".75" width=".75" height=".75" fill="#222"/></pattern><rect x="25.5" y="88" width="599" height="10.2" fill="#fff" /><rect x="25.5" y="98" width="11" height="520" fill="#fff" /><line x1="25.5" y1="88.2" x2="624" y2="88.2" stroke="#6a6a6a" stroke-width="0.7" /><line x1="36.5" y1="98.5" x2="624" y2="98.5" stroke="#5a5a5a" stroke-width="0.9" /><line x1="36.4" y1="88" x2="36.4" y2="618" stroke="#4a4a4a" stroke-width="0.9" /><line x1="25.6" y1="74" x2="25.6" y2="618" stroke="#5a5a5a" stroke-width="0.9" /><line x1="36.99" y1="96" x2="36.99" y2="98" stroke="#555" stroke-width="0.7" /><line x1="42.93" y1="96" x2="42.93" y2="98" stroke="#555" stroke-width="0.7" /><line x1="48.88" y1="96" x2="48.88" y2="98" stroke="#555" stroke-width="0.7" /><line x1="54.82" y1="96" x2="54.82" y2="98" stroke="#555" stroke-width="0.7" /><line x1="60.76" y1="96" x2="60.76" y2="98" stroke="#555" stroke-width="0.7" /><line x1="66.70" y1="88.5" x2="66.70" y2="98" stroke="#555" stroke-width="0.8" /><text x="68.7" y="94.6" font-size="5.8" fill="#555" font-weight="normal" text-anchor="start" letter-spacing=".6">72</text><line x1="72.64" y1="96" x2="72.64" y2="98" stroke="#555" stroke-width="0.7" /><line x1="78.58" y1="96" x2="78.58" y2="98" stroke="#555" stroke-width="0.7" /><line x1="84.53" y1="96" x2="84.53" y2="98" stroke="#555" stroke-width="0.7" /><line x1="90.47" y1="96" x2="90.47" y2="98" stroke="#555" stroke-width="0.7" /><line x1="96.41" y1="96" x2="96.41" y2="98" stroke="#555" stroke-width="0.7" /><line x1="102.35" y1="88.5" x2="102.35" y2="98" stroke="#555" stroke-width="0.8" /><text x="104.3" y="94.6" font-size="5.8" fill="#555" font-weight="normal" text-anchor="start" letter-spacing=".6">108</text><line x1="108.29" y1="96" x2="108.29" y2="98" stroke="#555" stroke-width="0.7" /><line x1="114.23" y1="96" x2="114.23" y2="98" stroke="#555" stroke-width="0.7" /><line x1="120.17" y1="96" x2="120.17" y2="98" stroke="#555" stroke-width="0.7" /><line x1="126.12" y1="96" x2="126.12" y2="98" stroke="#555" stroke-width="0.7" /><line x1="132.06" y1="96" x2="132.06" y2="98" stroke="#555" stroke-width="0.7" /><line x1="138.00" y1="88.5" x2="138.00" y2="98" stroke="#555" stroke-width="0.8" /><text x="140.0" y="94.6" font-size="5.8" fill="#555" font-weight="normal" text-anchor="start" letter-spacing=".6">144</text><line x1="143.94" y1="96" x2="143.94" y2="98" stroke="#555" stroke-width="0.7" /><line x1="149.88" y1="96" x2="149.88" y2="98" stroke="#555" stroke-width="0.7" /><line x1="155.82" y1="96" x2="155.82" y2="98" stroke="#555" stroke-width="0.7" /><line x1="161.77" y1="96" x2="161.77" y2="98" stroke="#555" stroke-width="0.7" /><line x1="167.71" y1="96" x2="167.71" y2="98" stroke="#555" stroke-width="0.7" /><line x1="173.65" y1="88.5" x2="173.65" y2="98" stroke="#555" stroke-width="0.8" /><text x="175.6" y="94.6" font-size="5.8" fill="#555" font-weight="normal" text-anchor="start" letter-spacing=".6">180</text><line x1="179.59" y1="96" x2="179.59" y2="98" stroke="#555" stroke-width="0.7" /><line x1="185.53" y1="96" x2="185.53" y2="98" stroke="#555" stroke-width="0.7" /><line x1="191.47" y1="96" x2="191.47" y2="98" stroke="#555" stroke-width="0.7" /><line x1="197.42" y1="96" x2="197.42" y2="98" stroke="#555" stroke-width="0.7" /><line x1="203.36" y1="96" x2="203.36" y2="98" stroke="#555" stroke-width="0.7" /><line x1="209.30" y1="88.5" x2="209.30" y2="98" stroke="#555" stroke-width="0.8" /><text x="211.3" y="94.6" font-size="5.8" fill="#555" font-weight="normal" text-anchor="start" letter-spacing=".6">216</text><line x1="215.24" y1="96" x2="215.24" y2="98" stroke="#555" stroke-width="0.7" /><line x1="221.18" y1="96" x2="221.18" y2="98" stroke="#555" stroke-width="0.7" /><line x1="227.12" y1="96" x2="227.12" y2="98" stroke="#555" stroke-width="0.7" /><line x1="233.07" y1="96" x2="233.07" y2="98" stroke="#555" stroke-width="0.7" /><line x1="239.01" y1="96" x2="239.01" y2="98" stroke="#555" stroke-width="0.7" /><line x1="244.95" y1="88.5" x2="244.95" y2="98" stroke="#555" stroke-width="0.8" /><text x="246.9" y="94.6" font-size="5.8" fill="#555" font-weight="normal" text-anchor="start" letter-spacing=".6">252</text><line x1="250.89" y1="96" x2="250.89" y2="98" stroke="#555" stroke-width="0.7" /><line x1="256.83" y1="96" x2="256.83" y2="98" stroke="#555" stroke-width="0.7" /><line x1="262.77" y1="96" x2="262.77" y2="98" stroke="#555" stroke-width="0.7" /><line x1="268.72" y1="96" x2="268.72" y2="98" stroke="#555" stroke-width="0.7" /><line x1="274.66" y1="96" x2="274.66" y2="98" stroke="#555" stroke-width="0.7" /><line x1="280.60" y1="88.5" x2="280.60" y2="98" stroke="#555" stroke-width="0.8" /><text x="282.6" y="94.6" font-size="5.8" fill="#555" font-weight="normal" text-anchor="start" letter-spacing=".6">288</text><line x1="286.54" y1="96" x2="286.54" y2="98" stroke="#555" stroke-width="0.7" /><line x1="292.48" y1="96" x2="292.48" y2="98" stroke="#555" stroke-width="0.7" /><line x1="298.42" y1="96" x2="298.42" y2="98" stroke="#555" stroke-width="0.7" /><line x1="304.37" y1="96" x2="304.37" y2="98" stroke="#555" stroke-width="0.7" /><line x1="310.31" y1="96" x2="310.31" y2="98" stroke="#555" stroke-width="0.7" /><line x1="316.25" y1="88.5" x2="316.25" y2="98" stroke="#555" stroke-width="0.8" /><text x="318.2" y="94.6" font-size="5.8" fill="#555" font-weight="normal" text-anchor="start" letter-spacing=".6">324</text><line x1="322.19" y1="96" x2="322.19" y2="98" stroke="#555" stroke-width="0.7" /><line x1="328.13" y1="96" x2="328.13" y2="98" stroke="#555" stroke-width="0.7" /><line x1="334.07" y1="96" x2="334.07" y2="98" stroke="#555" stroke-width="0.7" /><line x1="340.02" y1="96" x2="340.02" y2="98" stroke="#555" stroke-width="0.7" /><line x1="345.96" y1="96" x2="345.96" y2="98" stroke="#555" stroke-width="0.7" /><line x1="351.90" y1="88.5" x2="351.90" y2="98" stroke="#555" stroke-width="0.8" /><text x="353.9" y="94.6" font-size="5.8" fill="#555" font-weight="normal" text-anchor="start" letter-spacing=".6">360</text><line x1="357.84" y1="96" x2="357.84" y2="98" stroke="#555" stroke-width="0.7" /><line x1="363.78" y1="96" x2="363.78" y2="98" stroke="#555" stroke-width="0.7" /><line x1="369.72" y1="96" x2="369.72" y2="98" stroke="#555" stroke-width="0.7" /><line x1="375.67" y1="96" x2="375.67" y2="98" stroke="#555" stroke-width="0.7" /><line x1="381.61" y1="96" x2="381.61" y2="98" stroke="#555" stroke-width="0.7" /><line x1="387.55" y1="88.5" x2="387.55" y2="98" stroke="#555" stroke-width="0.8" /><text x="389.5" y="94.6" font-size="5.8" fill="#555" font-weight="normal" text-anchor="start" letter-spacing=".6">396</text><line x1="393.49" y1="96" x2="393.49" y2="98" stroke="#555" stroke-width="0.7" /><line x1="399.43" y1="96" x2="399.43" y2="98" stroke="#555" stroke-width="0.7" /><line x1="405.37" y1="96" x2="405.37" y2="98" stroke="#555" stroke-width="0.7" /><line x1="411.32" y1="96" x2="411.32" y2="98" stroke="#555" stroke-width="0.7" /><line x1="417.26" y1="96" x2="417.26" y2="98" stroke="#555" stroke-width="0.7" /><line x1="423.20" y1="88.5" x2="423.20" y2="98" stroke="#555" stroke-width="0.8" /><text x="425.2" y="94.6" font-size="5.8" fill="#555" font-weight="normal" text-anchor="start" letter-spacing=".6">432</text><line x1="429.14" y1="96" x2="429.14" y2="98" stroke="#555" stroke-width="0.7" /><line x1="435.08" y1="96" x2="435.08" y2="98" stroke="#555" stroke-width="0.7" /><line x1="441.02" y1="96" x2="441.02" y2="98" stroke="#555" stroke-width="0.7" /><line x1="446.97" y1="96" x2="446.97" y2="98" stroke="#555" stroke-width="0.7" /><line x1="452.91" y1="96" x2="452.91" y2="98" stroke="#555" stroke-width="0.7" /><line x1="458.85" y1="88.5" x2="458.85" y2="98" stroke="#555" stroke-width="0.8" /><text x="460.8" y="94.6" font-size="5.8" fill="#555" font-weight="normal" text-anchor="start" letter-spacing=".6">468</text><line x1="464.79" y1="96" x2="464.79" y2="98" stroke="#555" stroke-width="0.7" /><line x1="470.73" y1="96" x2="470.73" y2="98" stroke="#555" stroke-width="0.7" /><line x1="476.67" y1="96" x2="476.67" y2="98" stroke="#555" stroke-width="0.7" /><line x1="482.62" y1="96" x2="482.62" y2="98" stroke="#555" stroke-width="0.7" /><line x1="488.56" y1="96" x2="488.56" y2="98" stroke="#555" stroke-width="0.7" /><line x1="494.50" y1="88.5" x2="494.50" y2="98" stroke="#555" stroke-width="0.8" /><text x="496.5" y="94.6" font-size="5.8" fill="#555" font-weight="normal" text-anchor="start" letter-spacing=".6">504</text><line x1="500.44" y1="96" x2="500.44" y2="98" stroke="#555" stroke-width="0.7" /><line x1="506.38" y1="96" x2="506.38" y2="98" stroke="#555" stroke-width="0.7" /><line x1="512.32" y1="96" x2="512.32" y2="98" stroke="#555" stroke-width="0.7" /><line x1="518.27" y1="96" x2="518.27" y2="98" stroke="#555" stroke-width="0.7" /><line x1="524.21" y1="96" x2="524.21" y2="98" stroke="#555" stroke-width="0.7" /><line x1="530.15" y1="88.5" x2="530.15" y2="98" stroke="#555" stroke-width="0.8" /><text x="532.1" y="94.6" font-size="5.8" fill="#555" font-weight="normal" text-anchor="start" letter-spacing=".6">540</text><line x1="536.09" y1="96" x2="536.09" y2="98" stroke="#555" stroke-width="0.7" /><line x1="542.03" y1="96" x2="542.03" y2="98" stroke="#555" stroke-width="0.7" /><line x1="547.98" y1="96" x2="547.98" y2="98" stroke="#555" stroke-width="0.7" /><line x1="553.92" y1="96" x2="553.92" y2="98" stroke="#555" stroke-width="0.7" /><line x1="559.86" y1="96" x2="559.86" y2="98" stroke="#555" stroke-width="0.7" /><line x1="565.80" y1="88.5" x2="565.80" y2="98" stroke="#555" stroke-width="0.8" /><text x="567.8" y="94.6" font-size="5.8" fill="#555" font-weight="normal" text-anchor="start" letter-spacing=".6">576</text><line x1="571.74" y1="96" x2="571.74" y2="98" stroke="#555" stroke-width="0.7" /><line x1="577.68" y1="96" x2="577.68" y2="98" stroke="#555" stroke-width="0.7" /><line x1="583.62" y1="96" x2="583.62" y2="98" stroke="#555" stroke-width="0.7" /><line x1="589.57" y1="96" x2="589.57" y2="98" stroke="#555" stroke-width="0.7" /><line x1="595.51" y1="96" x2="595.51" y2="98" stroke="#555" stroke-width="0.7" /><line x1="601.45" y1="88.5" x2="601.45" y2="98" stroke="#555" stroke-width="0.8" /><text x="603.5" y="94.6" font-size="5.8" fill="#555" font-weight="normal" text-anchor="start" letter-spacing=".6">612</text><line x1="607.39" y1="96" x2="607.39" y2="98" stroke="#555" stroke-width="0.7" /><line x1="613.33" y1="96" x2="613.33" y2="98" stroke="#555" stroke-width="0.7" /><line x1="619.28" y1="96" x2="619.28" y2="98" stroke="#555" stroke-width="0.7" /><text x="37.6" y="94.6" font-size="5.8" fill="#333" font-weight="normal" text-anchor="start" >6</text><line x1="34.2" y1="102.02" x2="36.4" y2="102.02" stroke="#555" stroke-width="0.7" /><line x1="34.2" y1="107.97" x2="36.4" y2="107.97" stroke="#555" stroke-width="0.7" /><line x1="34.2" y1="113.91" x2="36.4" y2="113.91" stroke="#555" stroke-width="0.7" /><line x1="34.2" y1="119.86" x2="36.4" y2="119.86" stroke="#555" stroke-width="0.7" /><line x1="26" y1="125.80" x2="36.4" y2="125.80" stroke="#555" stroke-width="0.8" /><text transform="translate(28.6,123.6) rotate(90)" font-size="5.8" fill="#555" text-anchor="end" letter-spacing=".6">72</text><line x1="34.2" y1="131.75" x2="36.4" y2="131.75" stroke="#555" stroke-width="0.7" /><line x1="34.2" y1="137.69" x2="36.4" y2="137.69" stroke="#555" stroke-width="0.7" /><line x1="34.2" y1="143.63" x2="36.4" y2="143.63" stroke="#555" stroke-width="0.7" /><line x1="34.2" y1="149.58" x2="36.4" y2="149.58" stroke="#555" stroke-width="0.7" /><line x1="34.2" y1="155.53" x2="36.4" y2="155.53" stroke="#555" stroke-width="0.7" /><line x1="26" y1="161.47" x2="36.4" y2="161.47" stroke="#555" stroke-width="0.8" /><text transform="translate(28.6,159.3) rotate(90)" font-size="5.8" fill="#555" text-anchor="end" letter-spacing=".6">108</text><line x1="34.2" y1="167.41" x2="36.4" y2="167.41" stroke="#555" stroke-width="0.7" /><line x1="34.2" y1="173.36" x2="36.4" y2="173.36" stroke="#555" stroke-width="0.7" /><line x1="34.2" y1="179.31" x2="36.4" y2="179.31" stroke="#555" stroke-width="0.7" /><line x1="34.2" y1="185.25" x2="36.4" y2="185.25" stroke="#555" stroke-width="0.7" /><line x1="34.2" y1="191.19" x2="36.4" y2="191.19" stroke="#555" stroke-width="0.7" /><line x1="26" y1="197.14" x2="36.4" y2="197.14" stroke="#555" stroke-width="0.8" /><text transform="translate(28.6,194.9) rotate(90)" font-size="5.8" fill="#555" text-anchor="end" letter-spacing=".6">144</text><line x1="34.2" y1="203.08" x2="36.4" y2="203.08" stroke="#555" stroke-width="0.7" /><line x1="34.2" y1="209.03" x2="36.4" y2="209.03" stroke="#555" stroke-width="0.7" /><line x1="34.2" y1="214.97" x2="36.4" y2="214.97" stroke="#555" stroke-width="0.7" /><line x1="34.2" y1="220.92" x2="36.4" y2="220.92" stroke="#555" stroke-width="0.7" /><line x1="34.2" y1="226.86" x2="36.4" y2="226.86" stroke="#555" stroke-width="0.7" /><line x1="26" y1="232.81" x2="36.4" y2="232.81" stroke="#555" stroke-width="0.8" /><text transform="translate(28.6,230.6) rotate(90)" font-size="5.8" fill="#555" text-anchor="end" letter-spacing=".6">180</text><line x1="34.2" y1="238.75" x2="36.4" y2="238.75" stroke="#555" stroke-width="0.7" /><line x1="34.2" y1="244.70" x2="36.4" y2="244.70" stroke="#555" stroke-width="0.7" /><line x1="34.2" y1="250.65" x2="36.4" y2="250.65" stroke="#555" stroke-width="0.7" /><line x1="34.2" y1="256.59" x2="36.4" y2="256.59" stroke="#555" stroke-width="0.7" /><line x1="34.2" y1="262.54" x2="36.4" y2="262.54" stroke="#555" stroke-width="0.7" /><line x1="26" y1="268.48" x2="36.4" y2="268.48" stroke="#555" stroke-width="0.8" /><text transform="translate(28.6,266.3) rotate(90)" font-size="5.8" fill="#555" text-anchor="end" letter-spacing=".6">216</text><line x1="34.2" y1="274.43" x2="36.4" y2="274.43" stroke="#555" stroke-width="0.7" /><line x1="34.2" y1="280.37" x2="36.4" y2="280.37" stroke="#555" stroke-width="0.7" /><line x1="34.2" y1="286.31" x2="36.4" y2="286.31" stroke="#555" stroke-width="0.7" /><line x1="34.2" y1="292.26" x2="36.4" y2="292.26" stroke="#555" stroke-width="0.7" /><line x1="34.2" y1="298.21" x2="36.4" y2="298.21" stroke="#555" stroke-width="0.7" /><line x1="26" y1="304.15" x2="36.4" y2="304.15" stroke="#555" stroke-width="0.8" /><text transform="translate(28.6,302.0) rotate(90)" font-size="5.8" fill="#555" text-anchor="end" letter-spacing=".6">252</text><line x1="34.2" y1="310.10" x2="36.4" y2="310.10" stroke="#555" stroke-width="0.7" /><line x1="34.2" y1="316.04" x2="36.4" y2="316.04" stroke="#555" stroke-width="0.7" /><line x1="34.2" y1="321.99" x2="36.4" y2="321.99" stroke="#555" stroke-width="0.7" /><line x1="34.2" y1="327.93" x2="36.4" y2="327.93" stroke="#555" stroke-width="0.7" /><line x1="34.2" y1="333.88" x2="36.4" y2="333.88" stroke="#555" stroke-width="0.7" /><line x1="26" y1="339.82" x2="36.4" y2="339.82" stroke="#555" stroke-width="0.8" /><text transform="translate(28.6,337.6) rotate(90)" font-size="5.8" fill="#555" text-anchor="end" letter-spacing=".6">288</text><line x1="34.2" y1="345.76" x2="36.4" y2="345.76" stroke="#555" stroke-width="0.7" /><line x1="34.2" y1="351.71" x2="36.4" y2="351.71" stroke="#555" stroke-width="0.7" /><line x1="34.2" y1="357.65" x2="36.4" y2="357.65" stroke="#555" stroke-width="0.7" /><line x1="34.2" y1="363.60" x2="36.4" y2="363.60" stroke="#555" stroke-width="0.7" /><line x1="34.2" y1="369.55" x2="36.4" y2="369.55" stroke="#555" stroke-width="0.7" /><line x1="26" y1="375.49" x2="36.4" y2="375.49" stroke="#555" stroke-width="0.8" /><text transform="translate(28.6,373.3) rotate(90)" font-size="5.8" fill="#555" text-anchor="end" letter-spacing=".6">324</text><line x1="34.2" y1="381.44" x2="36.4" y2="381.44" stroke="#555" stroke-width="0.7" /><line x1="34.2" y1="387.38" x2="36.4" y2="387.38" stroke="#555" stroke-width="0.7" /><line x1="34.2" y1="393.32" x2="36.4" y2="393.32" stroke="#555" stroke-width="0.7" /><line x1="34.2" y1="399.27" x2="36.4" y2="399.27" stroke="#555" stroke-width="0.7" /><line x1="34.2" y1="405.22" x2="36.4" y2="405.22" stroke="#555" stroke-width="0.7" /><line x1="26" y1="411.16" x2="36.4" y2="411.16" stroke="#555" stroke-width="0.8" /><text transform="translate(28.6,409.0) rotate(90)" font-size="5.8" fill="#555" text-anchor="end" letter-spacing=".6">360</text><line x1="34.2" y1="417.11" x2="36.4" y2="417.11" stroke="#555" stroke-width="0.7" /><line x1="34.2" y1="423.05" x2="36.4" y2="423.05" stroke="#555" stroke-width="0.7" /><line x1="34.2" y1="429.00" x2="36.4" y2="429.00" stroke="#555" stroke-width="0.7" /><line x1="34.2" y1="434.94" x2="36.4" y2="434.94" stroke="#555" stroke-width="0.7" /><line x1="34.2" y1="440.89" x2="36.4" y2="440.89" stroke="#555" stroke-width="0.7" /><line x1="26" y1="446.83" x2="36.4" y2="446.83" stroke="#555" stroke-width="0.8" /><text transform="translate(28.6,444.6) rotate(90)" font-size="5.8" fill="#555" text-anchor="end" letter-spacing=".6">396</text><line x1="34.2" y1="452.78" x2="36.4" y2="452.78" stroke="#555" stroke-width="0.7" /><line x1="34.2" y1="458.72" x2="36.4" y2="458.72" stroke="#555" stroke-width="0.7" /><line x1="34.2" y1="464.67" x2="36.4" y2="464.67" stroke="#555" stroke-width="0.7" /><line x1="34.2" y1="470.61" x2="36.4" y2="470.61" stroke="#555" stroke-width="0.7" /><line x1="34.2" y1="476.56" x2="36.4" y2="476.56" stroke="#555" stroke-width="0.7" /><line x1="26" y1="482.50" x2="36.4" y2="482.50" stroke="#555" stroke-width="0.8" /><text transform="translate(28.6,480.3) rotate(90)" font-size="5.8" fill="#555" text-anchor="end" letter-spacing=".6">432</text><line x1="34.2" y1="488.45" x2="36.4" y2="488.45" stroke="#555" stroke-width="0.7" /><line x1="34.2" y1="494.39" x2="36.4" y2="494.39" stroke="#555" stroke-width="0.7" /><line x1="34.2" y1="500.34" x2="36.4" y2="500.34" stroke="#555" stroke-width="0.7" /><line x1="34.2" y1="506.28" x2="36.4" y2="506.28" stroke="#555" stroke-width="0.7" /><line x1="34.2" y1="512.23" x2="36.4" y2="512.23" stroke="#555" stroke-width="0.7" /><line x1="26" y1="518.17" x2="36.4" y2="518.17" stroke="#555" stroke-width="0.8" /><text transform="translate(28.6,516.0) rotate(90)" font-size="5.8" fill="#555" text-anchor="end" letter-spacing=".6">468</text><line x1="34.2" y1="524.12" x2="36.4" y2="524.12" stroke="#555" stroke-width="0.7" /><line x1="34.2" y1="530.06" x2="36.4" y2="530.06" stroke="#555" stroke-width="0.7" /><line x1="34.2" y1="536.00" x2="36.4" y2="536.00" stroke="#555" stroke-width="0.7" /><line x1="34.2" y1="541.95" x2="36.4" y2="541.95" stroke="#555" stroke-width="0.7" /><line x1="34.2" y1="547.89" x2="36.4" y2="547.89" stroke="#555" stroke-width="0.7" /><line x1="26" y1="553.84" x2="36.4" y2="553.84" stroke="#555" stroke-width="0.8" /><text transform="translate(28.6,551.6) rotate(90)" font-size="5.8" fill="#555" text-anchor="end" letter-spacing=".6">504</text><line x1="34.2" y1="559.79" x2="36.4" y2="559.79" stroke="#555" stroke-width="0.7" /><line x1="34.2" y1="565.73" x2="36.4" y2="565.73" stroke="#555" stroke-width="0.7" /><line x1="34.2" y1="571.68" x2="36.4" y2="571.68" stroke="#555" stroke-width="0.7" /><line x1="34.2" y1="577.62" x2="36.4" y2="577.62" stroke="#555" stroke-width="0.7" /><line x1="34.2" y1="583.57" x2="36.4" y2="583.57" stroke="#555" stroke-width="0.7" /><line x1="26" y1="589.51" x2="36.4" y2="589.51" stroke="#555" stroke-width="0.8" /><text transform="translate(28.6,587.3) rotate(90)" font-size="5.8" fill="#555" text-anchor="end" letter-spacing=".6">540</text><line x1="34.2" y1="595.46" x2="36.4" y2="595.46" stroke="#555" stroke-width="0.7" /><line x1="34.2" y1="601.40" x2="36.4" y2="601.40" stroke="#555" stroke-width="0.7" /><line x1="34.2" y1="607.35" x2="36.4" y2="607.35" stroke="#555" stroke-width="0.7" /><line x1="34.2" y1="613.29" x2="36.4" y2="613.29" stroke="#555" stroke-width="0.7" /><text transform="translate(28.6,623.0) rotate(90)" font-size="5.8" fill="#555" text-anchor="end" letter-spacing=".6">576</text><line x1="31" y1="88.5" x2="31" y2="98" stroke="#ccc" stroke-width="0.5" stroke-dasharray="1,1"/><line x1="26" y1="93.2" x2="36" y2="93.2" stroke="#ccc" stroke-width="0.5" stroke-dasharray="1,1"/><rect x="619.8" y="98.6" width="4.2" height="520" fill="#000" opacity=".045"/><line x1="619.2" y1="98" x2="619.2" y2="618" stroke="#9a9a9a" stroke-width="1.3" /><defs><linearGradient id="rectg" x1="0" y1="0" x2="1" y2="1"><stop offset="0" stop-color="#fff"/><stop offset="1" stop-color="#999"/></linearGradient><linearGradient id="gradg" x1="0" y1="0" x2="1" y2="0"><stop offset="0" stop-color="#fff"/><stop offset="1" stop-color="#111"/></linearGradient></defs><rect x="0" y="60.5" width="25.2" height="558" fill="url(#dk)" /><rect x="0" y="61" width="24.6" height="492" fill="#d2d2d2" /><rect x="0" y="61" width="1.2" height="492" fill="#9a9a9a" /><rect x="22.6" y="68" width="2" height="485" fill="#aaaaaa" /><line x1="24.4" y1="61" x2="24.4" y2="553" stroke="#5e5e5e" stroke-width="0.8" /><line x1="0" y1="552.8" x2="24.6" y2="552.8" stroke="#6a6a6a" stroke-width="0.9" /><rect x="0" y="61" width="24.6" height="7.2" fill="url(#hdr)" /><circle cx="4.3" cy="64.6" r="1.8" fill="#8a8a8a"/><path d="M20.2,62.8 L20.2,66.6 L17.8,64.7Z M23.2,62.8 L23.2,66.6 L20.8,64.7Z" fill="#d8d8d8"/><rect x="1.2" y="68.2" width="21.4" height="10.6" fill="#d8d8d8" /><line x1="4" y1="73" x2="20.5" y2="73" stroke="#c2c2c2" stroke-width="1.6" /><rect x="4.3" y="80" width="16.6" height="56" fill="#ececec" stroke="#8e8e8e" stroke-width=".8"/><rect x="4.7" y="80.4" width="15.8" height="13.2" fill="url(#btnsel)" /><line x1="4.3" y1="94" x2="20.9" y2="94" stroke="#a6a6a6" stroke-width="0.7" /><g transform="translate(12.6,87.0)"><path d="M-2,-5.5 L-2,3.5 L0,1.6 L1.6,5 L3,4.4 L1.5,1.2 L4,1Z" fill="#151515"/></g><rect x="4.7" y="94.4" width="15.8" height="13.2" fill="url(#btn)" /><line x1="4.3" y1="108" x2="20.9" y2="108" stroke="#a6a6a6" stroke-width="0.7" /><g transform="translate(12.6,101.0)"><path d="M-2,-5.5 L-2,3.5 L0,1.6 L1.6,5 L3,4.4 L1.5,1.2 L4,1Z" fill="#fff" stroke="#151515" stroke-width=".8"/></g><path d="M19.8,107 L19.8,104.6 L17.4,107Z" fill="#333"/><rect x="4.7" y="108.4" width="15.8" height="13.2" fill="url(#btn)" /><line x1="4.3" y1="122" x2="20.9" y2="122" stroke="#a6a6a6" stroke-width="0.7" /><g transform="translate(12.6,115.0)"><path d="M-1.5,-1.5 L5,5" stroke="#151515" stroke-width="1.3"/><path d="M-3,-6 L-3,0 M-6,-3 L0,-3 M-5.2,-5.2 L-0.8,-0.8 M-0.8,-5.2 L-5.2,-0.8" stroke="#333" stroke-width=".5"/></g><path d="M19.8,121 L19.8,118.6 L17.4,121Z" fill="#333"/><rect x="4.7" y="122.4" width="15.8" height="13.2" fill="url(#btn)" /><line x1="4.3" y1="136" x2="20.9" y2="136" stroke="#a6a6a6" stroke-width="0.7" /><g transform="translate(12.6,129.0)"><ellipse cx="0" cy="-1.5" rx="5.2" ry="3.3" fill="none" stroke="#151515" stroke-width="1"/><path d="M-3,1 C-4.5,2.5 -4,4.5 -2.5,5" fill="none" stroke="#151515" stroke-width=".9"/><path d="M0.5,0 L0.5,5.5 L2,4.2 L3,6 L4,5.6 L3,3.8 L5,3.6Z" fill="#151515"/></g><path d="M19.8,135 L19.8,132.6 L17.4,135Z" fill="#333"/><rect x="4.3" y="138.5" width="16.6" height="110.5" fill="#ececec" stroke="#8e8e8e" stroke-width=".8"/><rect x="4.7" y="138.9" width="15.8" height="12.7" fill="url(#btn)" /><line x1="4.3" y1="152" x2="20.9" y2="152" stroke="#a6a6a6" stroke-width="0.7" /><g transform="translate(12.6,145.25)"><path d="M0,-6 L2.8,-2 L1.8,3.2 L-1.8,3.2 L-2.8,-2Z" fill="#fff" stroke="#151515" stroke-width=".9"/><rect x="-2.2" y="3.4" width="4.4" height="1.8" fill="#151515"/><path d="M0,-5 L0,-0.5" stroke="#151515" stroke-width=".6"/><circle cx="0" cy="0" r=".8" fill="#151515"/><path d="M3.5,-4.5 L5.5,-4.5" stroke="#151515" stroke-width=".6"/></g><path d="M19.8,151 L19.8,148.6 L17.4,151Z" fill="#333"/><rect x="4.7" y="152.4" width="15.8" height="13.600000000000005" fill="url(#btn)" /><line x1="4.3" y1="166.4" x2="20.9" y2="166.4" stroke="#a6a6a6" stroke-width="0.7" /><g transform="translate(12.6,159.2)"><text x="0" y="5" font-family="Liberation Serif, serif" font-size="15" font-weight="bold" text-anchor="middle" fill="#151515">T</text></g><path d="M19.8,165.4 L19.8,163.0 L17.4,165.4Z" fill="#333"/><rect x="4.7" y="166.8" width="15.8" height="12.799999999999994" fill="url(#btn)" /><line x1="4.3" y1="180" x2="20.9" y2="180" stroke="#a6a6a6" stroke-width="0.7" /><g transform="translate(12.6,173.2)"><path d="M-5,-5 L5,5" stroke="#151515" stroke-width="1"/></g><path d="M19.8,179 L19.8,176.6 L17.4,179Z" fill="#333"/><rect x="4.7" y="180.4" width="15.8" height="12.799999999999994" fill="url(#btn)" /><line x1="4.3" y1="193.6" x2="20.9" y2="193.6" stroke="#a6a6a6" stroke-width="0.7" /><g transform="translate(12.6,186.8)"><rect x="-4.5" y="-4" width="9" height="8" fill="url(#rectg)" stroke="#444" stroke-width=".9"/></g><path d="M19.8,192.6 L19.8,190.2 L17.4,192.6Z" fill="#333"/><rect x="4.7" y="194.0" width="15.8" height="13.00000000000001" fill="url(#btn)" /><line x1="4.3" y1="207.4" x2="20.9" y2="207.4" stroke="#a6a6a6" stroke-width="0.7" /><g transform="translate(12.6,200.5)"><path d="M5,-5.5 L6,-4.5 L-0.5,2.5 L-2,1Z" fill="#ddd" stroke="#151515" stroke-width=".7"/><path d="M-2,1 L-0.5,2.5 C-1.5,4.5 -4,5.5 -6,5 C-4.5,4 -3.5,2.5 -2,1Z" fill="#151515"/></g><path d="M19.8,206.4 L19.8,204.0 L17.4,206.4Z" fill="#333"/><rect x="4.7" y="207.8" width="15.8" height="12.799999999999994" fill="url(#btn)" /><line x1="4.3" y1="221" x2="20.9" y2="221" stroke="#a6a6a6" stroke-width="0.7" /><g transform="translate(12.6,214.2)"><path d="M4,-6 L6,-4 L-3,5 L-6,6 L-5,3Z" fill="#eee" stroke="#151515" stroke-width=".8"/><path d="M-5,3 L-3,5" stroke="#151515" stroke-width=".6"/></g><path d="M19.8,220 L19.8,217.6 L17.4,220Z" fill="#333"/><rect x="4.7" y="221.4" width="15.8" height="13.600000000000005" fill="url(#btn)" /><line x1="4.3" y1="235.4" x2="20.9" y2="235.4" stroke="#a6a6a6" stroke-width="0.7" /><g transform="translate(12.6,228.2)"><path d="M-6,0 L-2,-3 L4,-3 L2,2 L-4,3Z" fill="#eee" stroke="#151515" stroke-width=".9"/><path d="M6,-6 L-1,1.5" stroke="#151515" stroke-width="1.6"/><path d="M-1,1.5 L-3,2.5 L-2,0.5Z" fill="#151515"/><path d="M-5,4.5 L3,4.5" stroke="#151515" stroke-width=".8"/></g><path d="M19.8,234.4 L19.8,232.0 L17.4,234.4Z" fill="#333"/><rect x="4.7" y="235.8" width="15.8" height="12.799999999999994" fill="url(#btn)" /><line x1="4.3" y1="249" x2="20.9" y2="249" stroke="#a6a6a6" stroke-width="0.7" /><g transform="translate(12.6,242.2)"><path d="M-2,-3.5 L6,-3.5 L2,1.5 L-6,1.5Z" fill="#f4f4f4" stroke="#151515" stroke-width=".9"/><path d="M-6,1.5 L2,1.5 L2,4 L-6,4Z" fill="#ccc" stroke="#151515" stroke-width=".9"/><path d="M2,4 L6,-1 L6,-3.5" fill="none" stroke="#151515" stroke-width=".9"/></g><path d="M19.8,248 L19.8,245.6 L17.4,248Z" fill="#333"/><rect x="4.3" y="251.5" width="16.6" height="83.5" fill="#ececec" stroke="#8e8e8e" stroke-width=".8"/><rect x="4.7" y="251.9" width="15.8" height="13.2" fill="url(#btn)" /><line x1="4.3" y1="265.5" x2="20.9" y2="265.5" stroke="#a6a6a6" stroke-width="0.7" /><g transform="translate(12.6,258.5)"><circle r="4.6" fill="none" stroke="#555" stroke-width=".9" stroke-dasharray="1.2,1"/><path d="M-4.6,0 A4.6,4.6 0 0 1 2,-4.2" fill="none" stroke="#151515" stroke-width="1.1"/><path d="M-1.5,-6.5 L-1.5,-2.5 L-5,-4.5Z" fill="#151515" transform="rotate(20)"/></g><path d="M19.8,264.5 L19.8,262.1 L17.4,264.5Z" fill="#333"/><rect x="4.7" y="265.9" width="15.8" height="13.2" fill="url(#btn)" /><line x1="4.3" y1="279.5" x2="20.9" y2="279.5" stroke="#a6a6a6" stroke-width="0.7" /><g transform="translate(12.6,272.5)"><rect x="-6" y="-5" width="8" height="7" fill="#ddd" stroke="#151515" stroke-width=".9"/><rect x="0" y="0" width="5.5" height="5" fill="#eee" stroke="#444" stroke-width=".8"/><path d="M-5,-4 L-1,0" stroke="#151515" stroke-width=".8"/></g><path d="M19.8,278.5 L19.8,276.1 L17.4,278.5Z" fill="#333"/><rect x="4.7" y="279.9" width="15.8" height="13.2" fill="url(#btn)" /><line x1="4.3" y1="293.5" x2="20.9" y2="293.5" stroke="#a6a6a6" stroke-width="0.7" /><g transform="translate(12.6,286.5)"><path d="M-6,4 C-2,3 -3,-2 1,-2 C4,-2 3,2 6,1" fill="none" stroke="#151515" stroke-width="1.3"/><path d="M-4,-4 C-2,-6 0,-4 2,-5.5" fill="none" stroke="#151515" stroke-width=".9"/><path d="M2,-6.5 L5.5,-5 L2.5,-3Z" fill="#151515"/><path d="M-3,5.5 L4,5" stroke="#151515" stroke-width=".8"/></g><path d="M19.8,292.5 L19.8,290.1 L17.4,292.5Z" fill="#333"/><rect x="4.7" y="293.9" width="15.8" height="13.2" fill="url(#btn)" /><line x1="4.3" y1="307.5" x2="20.9" y2="307.5" stroke="#a6a6a6" stroke-width="0.7" /><g transform="translate(12.6,300.5)"><rect x="-3" y="-3.5" width="8" height="7" fill="none" stroke="#333" stroke-width=".7" stroke-dasharray="1.4,1"/><path d="M-5.5,-5.5 L-5.5,2 L-3.8,0.5 L-2.6,3.2 L-1.4,2.7 L-2.6,0 L-0.5,-0.2Z" fill="#151515"/><rect x="3.8" y="-4.4" width="2" height="2" fill="#151515"/><rect x="3.8" y="2.4" width="2" height="2" fill="#151515"/></g><rect x="4.7" y="307.9" width="15.8" height="13.2" fill="url(#btn)" /><line x1="4.3" y1="321.5" x2="20.9" y2="321.5" stroke="#a6a6a6" stroke-width="0.7" /><g transform="translate(12.6,314.5)"><circle cx="-1.5" cy="-1.5" r="4" fill="#e8e8e8" stroke="#333" stroke-width=".8"/><circle cx="2" cy="1.5" r="3" fill="#ccc" stroke="#333" stroke-width=".7"/><path d="M1.5,1 L1.5,7 L3,5.6 L4,7.6 L5,7.1 L4,5.2 L6,5Z" fill="#151515"/></g><path d="M19.8,320.5 L19.8,318.1 L17.4,320.5Z" fill="#333"/><rect x="4.7" y="321.9" width="15.8" height="12.7" fill="url(#btn)" /><line x1="4.3" y1="335" x2="20.9" y2="335" stroke="#a6a6a6" stroke-width="0.7" /><g transform="translate(12.6,328.25)"><path d="M-6,-3 L0,-5 L6,-3 L6,3 L0,6 L-6,3Z M0,-5 L0,6 M-3,-4 L-3,4.5 M3,-4 L3,4.5 M-6,0 L0,0.5 L6,0" fill="#eee" stroke="#333" stroke-width=".7"/></g><path d="M19.8,334 L19.8,331.6 L17.4,334Z" fill="#333"/><rect x="4.3" y="337.5" width="16.6" height="55.5" fill="#ececec" stroke="#8e8e8e" stroke-width=".8"/><rect x="4.7" y="337.9" width="15.8" height="13.2" fill="url(#btn)" /><line x1="4.3" y1="351.5" x2="20.9" y2="351.5" stroke="#a6a6a6" stroke-width="0.7" /><g transform="translate(12.6,344.5)"><rect x="-5" y="-4.5" width="10" height="9" fill="#ddd" stroke="#151515" stroke-width=".9"/><path d="M-5,0 C-2,-2 2,2 5,0 M0,-4.5 C-2,-2 2,2 0,4.5" fill="none" stroke="#151515" stroke-width=".8"/><circle r="1.1" fill="#151515"/></g><rect x="4.7" y="351.9" width="15.8" height="13.2" fill="url(#btn)" /><line x1="4.3" y1="365.5" x2="20.9" y2="365.5" stroke="#a6a6a6" stroke-width="0.7" /><g transform="translate(12.6,358.5)"><rect x="-5.5" y="-4" width="11" height="8" fill="url(#gradg)" stroke="#333" stroke-width=".8"/></g><rect x="4.7" y="365.9" width="15.8" height="13.2" fill="url(#btn)" /><line x1="4.3" y1="379.5" x2="20.9" y2="379.5" stroke="#a6a6a6" stroke-width="0.7" /><g transform="translate(12.6,372.5)"><path d="M3,-6 L6,-3 L4,-1 L1,-4Z" fill="#151515"/><path d="M2,-3 L3.5,-1.5 L-3,5 L-5.5,6 L-4.5,3.5Z" fill="#eee" stroke="#151515" stroke-width=".8"/></g><path d="M19.8,378.5 L19.8,376.1 L17.4,378.5Z" fill="#333"/><rect x="4.7" y="379.9" width="15.8" height="12.7" fill="url(#btn)" /><line x1="4.3" y1="393" x2="20.9" y2="393" stroke="#a6a6a6" stroke-width="0.7" /><g transform="translate(12.6,386.25)"><circle cx="-3.5" cy="-2.5" r="2.6" fill="#ddd" stroke="#444" stroke-width=".8"/><circle cx="3.2" cy="3" r="2.6" fill="#fff" stroke="#333" stroke-width=".8"/><path d="M-1.5,-1 L1.5,1.5" stroke="#555" stroke-width=".8" stroke-dasharray="1,1"/></g><path d="M19.8,392 L19.8,389.6 L17.4,392Z" fill="#333"/><rect x="4.3" y="395.5" width="16.6" height="27.80000000000001" fill="#ececec" stroke="#8e8e8e" stroke-width=".8"/><rect x="4.7" y="395.9" width="15.8" height="13.2" fill="url(#btn)" /><line x1="4.3" y1="409.5" x2="20.9" y2="409.5" stroke="#a6a6a6" stroke-width="0.7" /><g transform="translate(12.6,402.5)"><rect x="-3" y="-2" width="7" height="8" rx="1" fill="#ddd" stroke="#151515" stroke-width=".9"/><rect x="-1.5" y="-4.5" width="4" height="2.5" fill="#999" stroke="#151515" stroke-width=".7"/><rect x="-1" y="1" width="3.5" height="3" fill="#888"/><path d="M-4,-5 L-6,-6 M-4,-3.5 L-6.5,-3.5 M-3.5,-6.5 L-4.5,-7.5" stroke="#444" stroke-width=".6"/></g><path d="M19.8,408.5 L19.8,406.1 L17.4,408.5Z" fill="#333"/><rect x="4.7" y="409.9" width="15.8" height="13.00000000000001" fill="url(#btn)" /><line x1="4.3" y1="423.3" x2="20.9" y2="423.3" stroke="#a6a6a6" stroke-width="0.7" /><g transform="translate(12.6,416.4)"><path d="M-6,5 L6,5" stroke="#151515" stroke-width=".9"/><rect x="-5" y="0" width="2.6" height="5" fill="#151515"/><rect x="-1.3" y="-3" width="2.6" height="8" fill="#555"/><rect x="2.4" y="-5.5" width="2.6" height="10.5" fill="#151515"/></g><path d="M19.8,422.3 L19.8,419.90000000000003 L17.4,422.3Z" fill="#333"/><rect x="4.3" y="425.8" width="16.6" height="55.80000000000001" fill="#ececec" stroke="#8e8e8e" stroke-width=".8"/><rect x="4.7" y="426.2" width="15.8" height="13.00000000000001" fill="url(#btn)" /><line x1="4.3" y1="439.6" x2="20.9" y2="439.6" stroke="#a6a6a6" stroke-width="0.7" /><g transform="translate(12.6,432.70000000000005)"><rect x="-4" y="-4" width="8" height="8" fill="#eee" stroke="#151515" stroke-width=".9"/><path d="M-6,-4 L-4,-4 M-4,-6 L-4,-4 M6,-4 L4,-4 M4,-6 L4,-4 M-6,4 L-4,4 M-4,6 L-4,4 M6,4 L4,4 M4,6 L4,4" stroke="#151515" stroke-width=".8"/></g><rect x="4.7" y="440.0" width="15.8" height="13.2" fill="url(#btn)" /><line x1="4.3" y1="453.6" x2="20.9" y2="453.6" stroke="#a6a6a6" stroke-width="0.7" /><g transform="translate(12.6,446.6)"><path d="M5,-6 L6.5,-4.5 L-2,3.5 L-5.5,5.5 L-4,2Z" fill="#ccc" stroke="#151515" stroke-width=".8"/><path d="M-6,-2 L-1,2" stroke="#151515" stroke-width=".8"/></g><path d="M19.8,452.6 L19.8,450.20000000000005 L17.4,452.6Z" fill="#333"/><rect x="4.7" y="454.0" width="15.8" height="13.2" fill="url(#btn)" /><line x1="4.3" y1="467.6" x2="20.9" y2="467.6" stroke="#a6a6a6" stroke-width="0.7" /><g transform="translate(12.6,460.6)"><path d="M-3,6 L-5,1 C-6,-1 -4.5,-1.5 -3.5,0 L-3.2,-4 C-3.2,-5.5 -1.8,-5.5 -1.8,-4 L-1.5,-5.5 C-1.3,-7 0.2,-6.8 0.2,-5.5 L0.6,-5 C0.8,-6.2 2.2,-6 2.2,-4.8 L2.6,-3.6 C3,-4.8 4.2,-4.4 4.2,-3.2 L4,2 L3,6Z" fill="#f6f6f6" stroke="#151515" stroke-width=".8" stroke-linejoin="round"/></g><path d="M19.8,466.6 L19.8,464.20000000000005 L17.4,466.6Z" fill="#333"/><rect x="4.7" y="468.0" width="15.8" height="13.2" fill="url(#btn)" /><line x1="4.3" y1="481.6" x2="20.9" y2="481.6" stroke="#a6a6a6" stroke-width="0.7" /><g transform="translate(12.6,474.6)"><circle cx="-1.5" cy="-1.5" r="3.8" fill="#f4f4f4" stroke="#151515" stroke-width="1.1"/><path d="M1.4,1.4 L5.5,5.5" stroke="#151515" stroke-width="1.8" stroke-linecap="round"/></g><rect x="5" y="485.5" width="4.5" height="4.5" fill="#fff" stroke="#111" stroke-width=".8"/><rect x="7.2" y="487.8" width="4.2" height="4.2" fill="#111" /><path d="M16,486.5 C18.5,486 20,487.5 20,490" fill="none" stroke="#111" stroke-width=".9"/><path d="M14.6,486.8 L17,485 L17,488.2Z M20,492 L18.4,489.6 L21.6,489.6Z" fill="#111"/><rect x="10.5" y="501.5" width="10" height="10" fill="#fff" stroke="#555" stroke-width=".8"/><rect x="13.4" y="504.4" width="4.2" height="4.2" fill="#d4d4d4" stroke="#555" stroke-width=".6"/><line x1="10.2" y1="512" x2="21" y2="501" stroke="#e0202a" stroke-width="1.3" /><rect x="4.6" y="496.6" width="10" height="10" fill="#e9a23a" stroke="#444" stroke-width=".8"/><circle cx="7.6" cy="499.6" r="2.2" fill="#e8402a"/><circle cx="11.5" cy="503.6" r="2.4" fill="#f0d030"/><circle cx="7.4" cy="504.2" r="1.6" fill="#d03a2a"/><circle cx="12" cy="499" r="1.4" fill="#f4e070"/><rect x="4.2" y="517.5" width="5.4" height="6" fill="#f6ecc4" stroke="#777" stroke-width=".6"/><rect x="10" y="517.5" width="5.4" height="6" fill="url(#gradg)" stroke="#777" stroke-width=".6"/><rect x="15.8" y="517.5" width="5.4" height="6" fill="#fff" stroke="#777" stroke-width=".6"/><line x1="16" y1="523.3" x2="21" y2="517.7" stroke="#e0202a" stroke-width="1" /><rect x="4.3" y="526.6" width="16.6" height="10.6" fill="url(#btn)" stroke="#8e8e8e" stroke-width=".8"/><circle cx="11.8" cy="531" r="3" fill="#fff" stroke="#222" stroke-width=".8"/><rect x="12.4" y="531.4" width="4" height="3.6" fill="#ddd" stroke="#222" stroke-width=".8"/><rect x="4.3" y="539.4" width="16.6" height="10.4" fill="url(#btn)" stroke="#8e8e8e" stroke-width=".8"/><rect x="10.5" y="542" width="6.5" height="3.6" rx=".8" fill="#fff" stroke="#333" stroke-width=".7"/><rect x="8" y="544.2" width="6.5" height="3.6" rx=".8" fill="#fff" stroke="#333" stroke-width=".7"/><rect x="0" y="0" width="624" height="14" fill="url(#mbg)" /><rect x="0" y="0" width="624" height="14" fill="url(#mbt)" /><line x1="0" y1="13.7" x2="624" y2="13.7" stroke="#858585" stroke-width="0.8" /><g transform="translate(18.3,6.8) scale(.95)"><path d="M0.2,-2.6 C1.2,-3.4 2.6,-3.6 3.6,-2.6 C2.2,-1.6 2.4,0.8 4,1.6 C3.4,3.4 2.2,5.2 1,5 C0.3,4.7 -0.3,4.7 -1,5 C-2.4,5.3 -4.4,2.2 -4.2,-0.4 C-4,-2.8 -1.6,-3.6 0.2,-2.6Z" fill="#1a1a1a"/><path d="M0,-3.2 C0,-4.6 1,-5.8 2.3,-6 C2.4,-4.6 1.4,-3.4 0,-3.2Z" fill="#1a1a1a"/></g><text x="36.3" y="10.5" font-size="10.2" fill="#1a1a1a" font-weight="bold" text-anchor="start" textLength="47" lengthAdjust="spacingAndGlyphs">Illustrator</text><text x="96" y="10.5" font-size="10" fill="#333" font-weight="normal" text-anchor="start" >File</text><text x="124" y="10.5" font-size="10" fill="#333" font-weight="normal" text-anchor="start" >Edit</text><text x="153" y="10.5" font-size="10" fill="#333" font-weight="normal" text-anchor="start" >Object</text><text x="195" y="10.5" font-size="10" fill="#333" font-weight="normal" text-anchor="start" >Type</text><text x="228.5" y="10.5" font-size="10" fill="#333" font-weight="normal" text-anchor="start" >Select</text><text x="266" y="10.5" font-size="10" fill="#333" font-weight="normal" text-anchor="start" >Effect</text><text x="303" y="10.5" font-size="10" fill="#333" font-weight="normal" text-anchor="start" >View</text><text x="336" y="10.5" font-size="10" fill="#333" font-weight="normal" text-anchor="start" >Window</text><text x="383" y="10.5" font-size="10" fill="#333" font-weight="normal" text-anchor="start" >Help</text><rect x="0" y="14" width="624" height="25" fill="#d7d7d7" /><line x1="0" y1="14.6" x2="624" y2="14.6" stroke="#efefef" stroke-width="1" /><line x1="0" y1="38.3" x2="624" y2="38.3" stroke="#b4b4b4" stroke-width="0.8" /><line x1="0" y1="39.2" x2="624" y2="39.2" stroke="#e9e9e9" stroke-width="0.8" /><rect x="2.5" y="18" width="1.6" height="17" fill="#c0c0c0" /><rect x="4.1" y="18" width="0.8" height="17" fill="#ececec" /><text x="13.3" y="31.6" font-size="15.5" fill="#b4b4b4" font-weight="normal" text-anchor="start" stroke="#b4b4b4" stroke-width=".5">Ai</text><rect x="42" y="21" width="10.5" height="10" fill="#a9a9a9" stroke="#8a8a8a" stroke-width=".7"/><text x="47.2" y="28.8" font-size="6.4" fill="#3a3a3a" font-weight="normal" text-anchor="middle" >Br</text><rect x="64.5" y="21" width="12" height="10" fill="#d0d0d0" stroke="#6a6a6a" stroke-width=".8"/><rect x="66" y="22.5" width="4.5" height="7" fill="#666" /><rect x="71.5" y="22.5" width="3.5" height="3" fill="#666" /><rect x="71.5" y="26.5" width="3.5" height="3" fill="#666" /><path d="M80.5,24.8 L85,24.8 L82.75,27.8Z" fill="#222"/><rect x="0" y="39.6" width="624" height="20.6" fill="#d7d7d7" /><rect x="2.5" y="42" width="1.6" height="15" fill="#c0c0c0" /><rect x="4.1" y="42" width="0.8" height="15" fill="#ececec" /><text x="10" y="51.2" font-size="6.4" fill="#222" font-weight="normal" text-anchor="start" >No Selection</text><rect x="70" y="43" width="11" height="12" fill="#e8a23a" stroke="#777" stroke-width=".6"/><circle cx="73" cy="46.5" r="2.4" fill="#e8402a"/><circle cx="78" cy="51" r="2.6" fill="#f0d030"/><circle cx="73.5" cy="52.5" r="1.8" fill="#e9742a"/><circle cx="78.5" cy="45.5" r="1.6" fill="#2a7a3a"/><rect x="81.3" y="43.2" width="7" height="11.6" rx="1.5" fill="url(#blue)" stroke="#3a6cb8" stroke-width=".6"/><path d="M83.0,48.0 L86.6,48.0 L84.8,50.6Z" fill="#0a1a40"/><rect x="95" y="43" width="11.5" height="12" fill="#fff" stroke="#777" stroke-width=".6"/><rect x="98" y="46" width="5.5" height="6" fill="none" stroke="#333" stroke-width=".8"/><line x1="95.5" y1="54.5" x2="106" y2="43.5" stroke="#e0202a" stroke-width="1.1" /><rect x="107" y="43.2" width="7" height="11.6" rx="1.5" fill="url(#blue)" stroke="#3a6cb8" stroke-width=".6"/><path d="M108.7,48.0 L112.3,48.0 L110.5,50.6Z" fill="#0a1a40"/><text x="122" y="51.4" font-size="6.4" fill="#2030d0" font-weight="normal" text-anchor="start" text-decoration="underline">Stroke:</text><line x1="122" y1="52.6" x2="142" y2="52.6" stroke="#2030d0" stroke-width="0.5" /><rect x="146" y="43.5" width="6" height="11" rx="1" fill="#f2f2f2" stroke="#999" stroke-width=".6"/><path d="M147.6,47.6 L150.4,47.6 L149,45.4Z M147.6,50.4 L150.4,50.4 L149,52.6Z" fill="#333"/><rect x="153.3" y="43.3" width="26" height="11.4" rx="1.5" fill="#fff" stroke="#9a9a9a" stroke-width=".7"/><rect x="179.3" y="43.2" width="9.5" height="11.6" rx="1.5" fill="url(#blue)" stroke="#3a6cb8" stroke-width=".6"/><path d="M182.25,48.0 L185.85000000000002,48.0 L184.05,50.6Z" fill="#0a1a40"/><rect x="193" y="43.3" width="62" height="11.4" rx="1.5" fill="#fff" stroke="#9a9a9a" stroke-width=".7"/><rect x="254.6" y="43.2" width="6.8" height="11.6" rx="1.5" fill="url(#blue)" stroke="#3a6cb8" stroke-width=".6"/><path d="M256.2,48.0 L259.8,48.0 L258.0,50.6Z" fill="#0a1a40"/><rect x="265.5" y="43.3" width="64" height="11.4" rx="1.5" fill="#fff" stroke="#9a9a9a" stroke-width=".7"/><rect x="329" y="43.2" width="6.6" height="11.6" rx="1.5" fill="url(#blue)" stroke="#3a6cb8" stroke-width=".6"/><path d="M330.5,48.0 L334.1,48.0 L332.3,50.6Z" fill="#0a1a40"/><circle cx="272" cy="49" r=".7" fill="#555"/><text x="281" y="51.3" font-size="6.3" fill="#222" font-weight="normal" text-anchor="start" >2 pt. Oval</text><text x="340.5" y="51.3" font-size="6.3" fill="#222" font-weight="normal" text-anchor="start" >Style:</text><rect x="357.5" y="43.3" width="14" height="11.4" rx="1.5" fill="#fff" stroke="#9a9a9a" stroke-width=".7"/><rect x="371.2" y="43.2" width="7" height="11.6" rx="1.5" fill="url(#blue)" stroke="#3a6cb8" stroke-width=".6"/><path d="M372.9,48.0 L376.5,48.0 L374.7,50.6Z" fill="#0a1a40"/><text x="385.5" y="51.3" font-size="6.3" fill="#2030d0" font-weight="normal" text-anchor="start" >Opacity:</text><line x1="385.5" y1="52.6" x2="408" y2="52.6" stroke="#2030d0" stroke-width="0.5" /><rect x="411" y="43.3" width="31.5" height="11.4" rx="1.5" fill="#fff" stroke="#9a9a9a" stroke-width=".7"/><text x="413" y="51.3" font-size="6.3" fill="#222" font-weight="normal" text-anchor="start" >100</text><rect x="442.3" y="43.2" width="10.5" height="11.6" rx="1.5" fill="url(#blue)" stroke="#3a6cb8" stroke-width=".6"/><path d="M446.2,46.8 L446.2,51.2 L449.6,49Z" fill="#0a1a40"/><text x="455" y="51.3" font-size="6.3" fill="#222" font-weight="normal" text-anchor="start" >%</text><rect x="471" y="43" width="12.5" height="12" fill="#ececec" stroke="#888" stroke-width=".6"/><rect x="473" y="45" width="5" height="3" fill="none" stroke="#555" stroke-width=".6"/><rect x="473" y="49.5" width="5" height="3" fill="none" stroke="#555" stroke-width=".6"/><path d="M477.5,47.5 L477.5,54 L479.2,52.4 L480.4,54.8 L481.4,54.3 L480.3,52 L482.4,51.8Z" fill="#111"/><rect x="484" y="43" width="6.5" height="12" fill="#e4e4e4" stroke="#999" stroke-width=".5"/><path d="M485.4,48 L489.2,48 L487.3,50.6Z" fill="#222"/><rect x="508.5" y="43.6" width="99.5" height="11" rx="3" fill="url(#wbtn)" stroke="#8c8c8c" stroke-width=".7"/><text x="558.3" y="51.5" font-size="6.5" fill="#222" font-weight="normal" text-anchor="middle" >Document Setup</text><rect x="613" y="43.6" width="30" height="11" rx="3" fill="url(#wbtn)" stroke="#8c8c8c" stroke-width=".7"/><rect x="25" y="60" width="599" height="14.2" fill="url(#tbg)" /><line x1="0" y1="60.3" x2="624" y2="60.3" stroke="#8e8e8e" stroke-width="0.8" /><circle cx="34.5" cy="67.2" r="4.3" fill="url(#rd)" stroke="#00000055" stroke-width=".5"/><circle cx="48.3" cy="67.2" r="4.3" fill="url(#yw)" stroke="#00000055" stroke-width=".5"/><circle cx="61.7" cy="67.2" r="4.3" fill="url(#gn)" stroke="#00000055" stroke-width=".5"/><circle cx="34.5" cy="67.6" r="1.5" fill="#7a0a08" opacity=".8"/><path d="M416.5,62 L423.5,62 L426,64.5 L426,72 L416.5,72Z" fill="#f3c896" opacity=".75"/><rect x="418" y="66" width="6.5" height="4.5" fill="#eba860" opacity=".7"/><text x="428" y="71" font-size="9.3" fill="#222" font-weight="normal" text-anchor="start" textLength="178" lengthAdjust="spacingAndGlyphs">Flower_Pattern.ai* @ 150% (CMYK/Preview)</text><rect x="25" y="74" width="599" height="14" fill="url(#tabg)" /><line x1="25" y1="74.3" x2="624" y2="74.3" stroke="#747474" stroke-width="0.9" /><rect x="27" y="74.8" width="142.8" height="13.2" fill="url(#tabi)" /><rect x="170.6" y="74.8" width="170" height="13.2" fill="url(#taba)" /><line x1="169.9" y1="74.6" x2="169.9" y2="88" stroke="#6e6e6e" stroke-width="0.8" /><line x1="340.9" y1="74.6" x2="340.9" y2="88" stroke="#6e6e6e" stroke-width="0.8" /><circle cx="33.2" cy="81.3" r="3.6" fill="none" stroke="#444" stroke-width=".7"/><path d="M31.400000000000002,79.5 L35.0,83.1 M35.0,79.5 L31.400000000000002,83.1" stroke="#444" stroke-width=".7"/><circle cx="179" cy="81.3" r="3.6" fill="none" stroke="#444" stroke-width=".7"/><path d="M177.2,79.5 L180.8,83.1 M180.8,79.5 L177.2,83.1" stroke="#444" stroke-width=".7"/><text x="41.6" y="84.3" font-size="8.2" fill="#1c1c1c" font-weight="normal" text-anchor="start" textLength="120.6" lengthAdjust="spacingAndGlyphs">Pattern.ai* @ 100% (CMYK/Preview)</text><text x="186" y="84.3" font-size="8.2" fill="#1c1c1c" font-weight="normal" text-anchor="start" textLength="147.3" lengthAdjust="spacingAndGlyphs">Flower_Pattern.ai* @ 150% (CMYK/Preview)</text><path d="M460.4,123.6 L460.4,119 Q460.4,116.6 462.79999999999995,116.6 L613.4,116.6 Q615.8,116.6 615.8,119 L615.8,123.6Z" fill="url(#hdr)"/><circle cx="464.3" cy="120.2" r="1.9" fill="#9a9a9a"/><path d="M611,118.3 L611,122 L608.7,120.15Z M613.8,118.3 L613.8,122 L611.5,120.15Z" fill="#d8d8d8"/><rect x="460.4" y="123.6" width="155.39999999999998" height="13" fill="#989898" /><rect x="461.2" y="124.4" width="42.5" height="12.4" fill="#d6d6d6" /><line x1="503.8" y1="124" x2="503.8" y2="136.6" stroke="#6a6a6a" stroke-width="0.7" /><text x="464.5" y="133.6" font-size="6.4" fill="#222" font-weight="normal" text-anchor="start" textLength="35" lengthAdjust="spacingAndGlyphs">SWATCHES</text><path d="M603.2,129 L606.4,129 L604.8,131Z" fill="#222"/><line x1="607.5" y1="128" x2="613" y2="128" stroke="#3a3a3a" stroke-width="0.8" /><line x1="607.5" y1="130" x2="613" y2="130" stroke="#3a3a3a" stroke-width="0.8" /><line x1="607.5" y1="132" x2="613" y2="132" stroke="#3a3a3a" stroke-width="0.8" /><rect x="460.4" y="136.6" width="155.39999999999998" height="112" fill="#d6d6d6" /><rect x="600.6" y="136.6" width="8.6" height="112" fill="url(#scr)" /><line x1="460.79999999999995" y1="123.6" x2="460.79999999999995" y2="260" stroke="#8c8c8c" stroke-width="0.9" /><line x1="615.4" y1="123.6" x2="615.4" y2="260" stroke="#8c8c8c" stroke-width="0.9" /><rect x="462.2" y="136.9" width="9.2" height="9.2" fill="#fff" /><line x1="462.5" y1="145.8" x2="471.09999999999997" y2="137.20000000000002" stroke="#e0202a" stroke-width="1.2" /><line x1="471.4" y1="136.9" x2="471.4" y2="146.1" stroke="#00000030" stroke-width="0.5" /><rect x="471.4" y="136.9" width="9.2" height="9.2" fill="#fff" /><circle cx="476.0" cy="141.5" r="2.6" fill="none" stroke="#222" stroke-width=".7"/><line x1="476.0" y1="137.70000000000002" x2="476.0" y2="145.3" stroke="#222" stroke-width="0.6" /><line x1="472.2" y1="141.5" x2="479.79999999999995" y2="141.5" stroke="#222" stroke-width="0.6" /><line x1="480.59999999999997" y1="136.9" x2="480.59999999999997" y2="146.1" stroke="#00000030" stroke-width="0.5" /><rect x="480.59999999999997" y="136.9" width="9.25" height="9.2" fill="#ffffff" /><line x1="489.79999999999995" y1="136.9" x2="489.79999999999995" y2="146.1" stroke="#00000030" stroke-width="0.5" /><rect x="489.8" y="136.9" width="9.25" height="9.2" fill="#000000" /><line x1="499.0" y1="136.9" x2="499.0" y2="146.1" stroke="#00000030" stroke-width="0.5" /><rect x="499.0" y="136.9" width="9.25" height="9.2" fill="#e31e26" /><line x1="508.2" y1="136.9" x2="508.2" y2="146.1" stroke="#00000030" stroke-width="0.5" /><rect x="508.2" y="136.9" width="9.25" height="9.2" fill="#fff200" /><line x1="517.4" y1="136.9" x2="517.4" y2="146.1" stroke="#00000030" stroke-width="0.5" /><rect x="517.4" y="136.9" width="9.25" height="9.2" fill="#00a650" /><line x1="526.6" y1="136.9" x2="526.6" y2="146.1" stroke="#00000030" stroke-width="0.5" /><rect x="526.6" y="136.9" width="9.25" height="9.2" fill="#00adef" /><line x1="535.8000000000001" y1="136.9" x2="535.8000000000001" y2="146.1" stroke="#00000030" stroke-width="0.5" /><rect x="535.8" y="136.9" width="9.25" height="9.2" fill="#2e3192" /><line x1="545.0" y1="136.9" x2="545.0" y2="146.1" stroke="#00000030" stroke-width="0.5" /><rect x="545.0" y="136.9" width="9.25" height="9.2" fill="#ec008c" /><line x1="554.2" y1="136.9" x2="554.2" y2="146.1" stroke="#00000030" stroke-width="0.5" /><rect x="554.2" y="136.9" width="9.25" height="9.2" fill="#c4122f" /><line x1="563.4000000000001" y1="136.9" x2="563.4000000000001" y2="146.1" stroke="#00000030" stroke-width="0.5" /><rect x="563.4" y="136.9" width="9.25" height="9.2" fill="#ee3a35" /><line x1="572.6" y1="136.9" x2="572.6" y2="146.1" stroke="#00000030" stroke-width="0.5" /><rect x="572.6" y="136.9" width="9.25" height="9.2" fill="#f15a29" /><line x1="581.8000000000001" y1="136.9" x2="581.8000000000001" y2="146.1" stroke="#00000030" stroke-width="0.5" /><rect x="581.8" y="136.9" width="9.25" height="9.2" fill="#f7941e" /><line x1="591.0" y1="136.9" x2="591.0" y2="146.1" stroke="#00000030" stroke-width="0.5" /><rect x="591.0" y="136.9" width="9.25" height="9.2" fill="#fbb040" /><line x1="600.2" y1="136.9" x2="600.2" y2="146.1" stroke="#00000030" stroke-width="0.5" /><line x1="462.2" y1="146.1" x2="600.2" y2="146.1" stroke="#00000030" stroke-width="0.5" /><rect x="462.2" y="146.1" width="9.25" height="9.2" fill="#f9ed32" /><line x1="471.4" y1="146.1" x2="471.4" y2="155.29999999999998" stroke="#00000030" stroke-width="0.5" /><rect x="471.4" y="146.1" width="9.25" height="9.2" fill="#d7df23" /><line x1="480.59999999999997" y1="146.1" x2="480.59999999999997" y2="155.29999999999998" stroke="#00000030" stroke-width="0.5" /><rect x="480.59999999999997" y="146.1" width="9.25" height="9.2" fill="#8dc63f" /><line x1="489.79999999999995" y1="146.1" x2="489.79999999999995" y2="155.29999999999998" stroke="#00000030" stroke-width="0.5" /><rect x="489.8" y="146.1" width="9.25" height="9.2" fill="#39b54a" /><line x1="499.0" y1="146.1" x2="499.0" y2="155.29999999999998" stroke="#00000030" stroke-width="0.5" /><rect x="499.0" y="146.1" width="9.25" height="9.2" fill="#0d9e4a" /><line x1="508.2" y1="146.1" x2="508.2" y2="155.29999999999998" stroke="#00000030" stroke-width="0.5" /><rect x="508.2" y="146.1" width="9.25" height="9.2" fill="#0b6b3a" /><line x1="517.4" y1="146.1" x2="517.4" y2="155.29999999999998" stroke="#00000030" stroke-width="0.5" /><rect x="517.4" y="146.1" width="9.25" height="9.2" fill="#2bb673" /><line x1="526.6" y1="146.1" x2="526.6" y2="155.29999999999998" stroke="#00000030" stroke-width="0.5" /><rect x="526.6" y="146.1" width="9.25" height="9.2" fill="#00a79d" /><line x1="535.8000000000001" y1="146.1" x2="535.8000000000001" y2="155.29999999999998" stroke="#00000030" stroke-width="0.5" /><rect x="535.8" y="146.1" width="9.25" height="9.2" fill="#27aae1" /><line x1="545.0" y1="146.1" x2="545.0" y2="155.29999999999998" stroke="#00000030" stroke-width="0.5" /><rect x="545.0" y="146.1" width="9.25" height="9.2" fill="#1c75bc" /><line x1="554.2" y1="146.1" x2="554.2" y2="155.29999999999998" stroke="#00000030" stroke-width="0.5" /><rect x="554.2" y="146.1" width="9.25" height="9.2" fill="#2b3990" /><line x1="563.4000000000001" y1="146.1" x2="563.4000000000001" y2="155.29999999999998" stroke="#00000030" stroke-width="0.5" /><rect x="563.4" y="146.1" width="9.25" height="9.2" fill="#262262" /><line x1="572.6" y1="146.1" x2="572.6" y2="155.29999999999998" stroke="#00000030" stroke-width="0.5" /><rect x="572.6" y="146.1" width="9.25" height="9.2" fill="#662d91" /><line x1="581.8000000000001" y1="146.1" x2="581.8000000000001" y2="155.29999999999998" stroke="#00000030" stroke-width="0.5" /><rect x="581.8" y="146.1" width="9.25" height="9.2" fill="#92278f" /><line x1="591.0" y1="146.1" x2="591.0" y2="155.29999999999998" stroke="#00000030" stroke-width="0.5" /><rect x="591.0" y="146.1" width="9.25" height="9.2" fill="#9e1f63" /><line x1="600.2" y1="146.1" x2="600.2" y2="155.29999999999998" stroke="#00000030" stroke-width="0.5" /><line x1="462.2" y1="155.29999999999998" x2="600.2" y2="155.29999999999998" stroke="#00000030" stroke-width="0.5" /><rect x="462.2" y="155.4" width="9.25" height="9.2" fill="#da1c5c" /><line x1="471.4" y1="155.4" x2="471.4" y2="164.6" stroke="#00000030" stroke-width="0.5" /><rect x="471.4" y="155.4" width="9.25" height="9.2" fill="#ee2a7b" /><line x1="480.59999999999997" y1="155.4" x2="480.59999999999997" y2="164.6" stroke="#00000030" stroke-width="0.5" /><rect x="480.59999999999997" y="155.4" width="9.25" height="9.2" fill="#c7b299" /><line x1="489.79999999999995" y1="155.4" x2="489.79999999999995" y2="164.6" stroke="#00000030" stroke-width="0.5" /><rect x="489.8" y="155.4" width="9.25" height="9.2" fill="#998675" /><line x1="499.0" y1="155.4" x2="499.0" y2="164.6" stroke="#00000030" stroke-width="0.5" /><rect x="499.0" y="155.4" width="9.25" height="9.2" fill="#736357" /><line x1="508.2" y1="155.4" x2="508.2" y2="164.6" stroke="#00000030" stroke-width="0.5" /><rect x="508.2" y="155.4" width="9.25" height="9.2" fill="#534741" /><line x1="517.4" y1="155.4" x2="517.4" y2="164.6" stroke="#00000030" stroke-width="0.5" /><rect x="517.4" y="155.4" width="9.25" height="9.2" fill="#c69c6d" /><line x1="526.6" y1="155.4" x2="526.6" y2="164.6" stroke="#00000030" stroke-width="0.5" /><rect x="526.6" y="155.4" width="9.25" height="9.2" fill="#a67c52" /><line x1="535.8000000000001" y1="155.4" x2="535.8000000000001" y2="164.6" stroke="#00000030" stroke-width="0.5" /><rect x="535.8" y="155.4" width="9.25" height="9.2" fill="#8c6239" /><line x1="545.0" y1="155.4" x2="545.0" y2="164.6" stroke="#00000030" stroke-width="0.5" /><rect x="545.0" y="155.4" width="9.25" height="9.2" fill="#754c24" /><line x1="554.2" y1="155.4" x2="554.2" y2="164.6" stroke="#00000030" stroke-width="0.5" /><rect x="554.2" y="155.4" width="9.25" height="9.2" fill="#603913" /><line x1="563.4000000000001" y1="155.4" x2="563.4000000000001" y2="164.6" stroke="#00000030" stroke-width="0.5" /><rect x="563.4" y="155.4" width="9.25" height="9.2" fill="#42210b" /><line x1="572.6" y1="155.4" x2="572.6" y2="164.6" stroke="#00000030" stroke-width="0.5" /><rect x="572.6" y="155.4" width="9.2" height="9.2" fill="#e8e8e8" /><rect x="572.6" y="155.4" width="9.2" height="9.2" fill="url(#dots)"/><line x1="581.8000000000001" y1="155.4" x2="581.8000000000001" y2="164.6" stroke="#00000030" stroke-width="0.5" /><rect x="581.8" y="155.4" width="9.2" height="9.2" fill="#161616" /><circle cx="586.4" cy="160.0" r="3" fill="#f2f2f2"/><circle cx="586.4" cy="160.0" r="3" fill="url(#dots)"/><line x1="591.0" y1="155.4" x2="591.0" y2="164.6" stroke="#00000030" stroke-width="0.5" /><rect x="591.0" y="155.4" width="1.6333333333333333" height="9.2" fill="#f7941e" /><rect x="592.5333333333333" y="155.4" width="1.6333333333333333" height="9.2" fill="#39b54a" /><rect x="594.0666666666667" y="155.4" width="1.6333333333333333" height="9.2" fill="#fbb040" /><rect x="595.6" y="155.4" width="1.6333333333333333" height="9.2" fill="#e31e26" /><rect x="597.1333333333333" y="155.4" width="1.6333333333333333" height="9.2" fill="#f9ed32" /><rect x="598.6666666666666" y="155.4" width="1.6333333333333333" height="9.2" fill="#39b54a" /><line x1="462.2" y1="164.6" x2="600.2" y2="164.6" stroke="#00000030" stroke-width="0.5" /><rect x="462.2" y="164.8" width="9.2" height="9.3" fill="#5b2a8c" /><circle cx="466.8" cy="169.5" r="3.3" fill="#fff"/><rect x="472.0" y="164.8" width="9.2" height="9.3" fill="#e3a33a" stroke="#555" stroke-width=".5"/><circle cx="475.0" cy="167.8" r="2" fill="#e8402a"/><circle cx="478.4" cy="170.8" r="2.2" fill="#d84a2a"/><circle cx="478.5" cy="167.3" r="1.3" fill="#f4e070"/><circle cx="474.6" cy="171.8" r="1.3" fill="#f0d030"/><path d="M462.4,177.0 L464.4,175.0 L467.9,175.0 L468.9,176.2 L470.79999999999995,176.2 L470.79999999999995,183.0 L462.4,183.0Z" fill="#c9c9c9" stroke="#7a7a7a" stroke-width=".6"/><path d="M462.4,181.6 L470.79999999999995,181.6" stroke="#8a8a8a" stroke-width=".5"/><rect x="471.40000000000003" y="174.20000000000002" width="101.99999999999999" height="9.6" fill="none" stroke="#f4f4f4" stroke-width=".8"/><rect x="471.8" y="174.4" width="8.2" height="9.2" fill="#000" /><rect x="480.0" y="174.4" width="1" height="9.2" fill="#f0f0f0" /><rect x="481.0" y="174.4" width="8.2" height="9.2" fill="#3c3c3c" /><rect x="489.2" y="174.4" width="1" height="9.2" fill="#f0f0f0" /><rect x="490.2" y="174.4" width="8.2" height="9.2" fill="#565656" /><rect x="498.4" y="174.4" width="1" height="9.2" fill="#f0f0f0" /><rect x="499.40000000000003" y="174.4" width="8.2" height="9.2" fill="#707070" /><rect x="507.6" y="174.4" width="1" height="9.2" fill="#f0f0f0" /><rect x="508.6" y="174.4" width="8.2" height="9.2" fill="#8a8a8a" /><rect x="516.8000000000001" y="174.4" width="1" height="9.2" fill="#f0f0f0" /><rect x="517.8" y="174.4" width="8.2" height="9.2" fill="#9c9c9c" /><rect x="526.0" y="174.4" width="1" height="9.2" fill="#f0f0f0" /><rect x="527.0" y="174.4" width="8.2" height="9.2" fill="#b2b2b2" /><rect x="535.2" y="174.4" width="1" height="9.2" fill="#f0f0f0" /><rect x="536.2" y="174.4" width="8.2" height="9.2" fill="#c8c8c8" /><rect x="544.4000000000001" y="174.4" width="1" height="9.2" fill="#f0f0f0" /><rect x="545.4" y="174.4" width="8.2" height="9.2" fill="#dadada" /><rect x="553.6" y="174.4" width="1" height="9.2" fill="#f0f0f0" /><rect x="554.6" y="174.4" width="8.2" height="9.2" fill="#e8e8e8" /><rect x="562.8000000000001" y="174.4" width="1" height="9.2" fill="#f0f0f0" /><rect x="563.8" y="174.4" width="8.2" height="9.2" fill="#f2f2f2" /><rect x="572.0" y="174.4" width="1" height="9.2" fill="#f0f0f0" /><path d="M462.4,186.4 L464.4,184.4 L467.9,184.4 L468.9,185.6 L470.79999999999995,185.6 L470.79999999999995,192.4 L462.4,192.4Z" fill="#c9c9c9" stroke="#7a7a7a" stroke-width=".6"/><path d="M462.4,191.0 L470.79999999999995,191.0" stroke="#8a8a8a" stroke-width=".5"/><rect x="471.8" y="183.8" width="8.2" height="9.2" fill="#e31e26" /><rect x="480.0" y="183.8" width="1" height="9.2" fill="#f0f0f0" /><rect x="481.0" y="183.8" width="8.2" height="9.2" fill="#f26522" /><rect x="489.2" y="183.8" width="1" height="9.2" fill="#f0f0f0" /><rect x="490.2" y="183.8" width="8.2" height="9.2" fill="#ffde17" /><rect x="498.4" y="183.8" width="1" height="9.2" fill="#f0f0f0" /><rect x="499.40000000000003" y="183.8" width="8.2" height="9.2" fill="#0d9e4a" /><rect x="507.6" y="183.8" width="1" height="9.2" fill="#f0f0f0" /><rect x="508.6" y="183.8" width="8.2" height="9.2" fill="#1f4ba0" /><rect x="516.8000000000001" y="183.8" width="1" height="9.2" fill="#f0f0f0" /><rect x="517.8" y="183.8" width="8.2" height="9.2" fill="#7f3f98" /><rect x="526.0" y="183.8" width="1" height="9.2" fill="#f0f0f0" /><path d="M462.4,195.79999999999998 L464.4,193.79999999999998 L467.9,193.79999999999998 L468.9,194.99999999999997 L470.79999999999995,194.99999999999997 L470.79999999999995,201.79999999999998 L462.4,201.79999999999998Z" fill="#c9c9c9" stroke="#7a7a7a" stroke-width=".6"/><path d="M462.4,200.39999999999998 L470.79999999999995,200.39999999999998" stroke="#8a8a8a" stroke-width=".5"/><rect x="461.2" y="248.4" width="153.79999999999998" height="11.6" fill="url(#wbtn)" /><line x1="460.4" y1="248.4" x2="615.8" y2="248.4" stroke="#a8a8a8" stroke-width="0.7" /><rect x="466.5" y="250.5" width="5" height="7" rx="1" fill="#8ab0d0"/><path d="M603,258.5 L613.5,248.8 L613.5,258.5Z" fill="#cfcfcf" stroke="#aaa" stroke-width=".5"/><rect x="460.4" y="260" width="155.39999999999998" height="2.2" fill="#2e2e2e" /><rect x="460.4" y="262.2" width="155.39999999999998" height="12" fill="#7e7e7e" /><rect x="461.2" y="263" width="12" height="11.4" fill="#d2d2d2" /><text x="463.6" y="271.6" font-size="6.4" fill="#222" font-weight="normal" text-anchor="start" >LAYERS</text><path d="M603.2,267.4 L606.4,267.4 L604.8,269.4Z" fill="#222"/><line x1="607.5" y1="266.4" x2="613" y2="266.4" stroke="#333" stroke-width="0.8" /><line x1="607.5" y1="268.4" x2="613" y2="268.4" stroke="#333" stroke-width="0.8" /><line x1="607.5" y1="270.4" x2="613" y2="270.4" stroke="#333" stroke-width="0.8" /><rect x="460.4" y="274.2" width="155.39999999999998" height="344" fill="#fff" /><rect x="461.2" y="274.2" width="13" height="344" fill="#c6c6c6" /><rect x="474.2" y="274.2" width="12.5" height="344" fill="#dadada" /><rect x="600.4" y="274.2" width="4" height="344" fill="#ececec" /><rect x="604.4" y="274.2" width="11" height="344" fill="url(#scr)" /><rect x="600.4" y="274.2" width="4" height="17" fill="#aaa" /><line x1="460.4" y1="274.91" x2="604.4" y2="274.91" stroke="#9c9c9c" stroke-width="0.7" /><rect x="462.2" y="276.11" width="10.6" height="10.98" fill="#cdcdcd" stroke="#8a8a8a" stroke-width=".5"/><path d="M463.4,281.50 C465,278.30 469.8,278.30 471.6,281.50 C469.8,284.30 465,284.30 463.4,281.50Z" fill="#2a2a2a"/><circle cx="467.6" cy="280.90" r="1.1" fill="#ddd"/><rect x="475" y="276.31" width="10.4" height="10.58" fill="#e4e4e4" stroke="#aaa" stroke-width=".5"/><rect x="487.2" y="275.71" width="2.4" height="11.78" fill="#1ff4f4" /><path d="M503.4,278.90 L503.4,284.10 L507.4,281.50Z" fill="#444"/><rect x="512.6" y="276.30" width="10.6" height="10.4" fill="#fff" stroke="#444" stroke-width=".7"/><polygon points="517.90,277.30 518.94,280.07 521.89,280.20 519.58,282.05 520.37,284.90 517.90,283.26 515.43,284.90 516.22,282.05 513.91,280.20 516.86,280.07" fill="#4b2f9e"/><text x="527" y="283.70" font-size="6.2" fill="#222" font-weight="normal" text-anchor="start" >&lt;Group&gt;</text><circle cx="591.8" cy="281.50" r="2.7" fill="#fff" stroke="#333" stroke-width=".8"/><line x1="460.4" y1="288.09" x2="604.4" y2="288.09" stroke="#9c9c9c" stroke-width="0.7" /><rect x="462.2" y="289.29" width="10.6" height="10.98" fill="#cdcdcd" stroke="#8a8a8a" stroke-width=".5"/><path d="M463.4,294.68 C465,291.48 469.8,291.48 471.6,294.68 C469.8,297.48 465,297.48 463.4,294.68Z" fill="#2a2a2a"/><circle cx="467.6" cy="294.08" r="1.1" fill="#ddd"/><rect x="475" y="289.49" width="10.4" height="10.58" fill="#e4e4e4" stroke="#aaa" stroke-width=".5"/><rect x="487.2" y="288.89" width="2.4" height="11.78" fill="#1ff4f4" /><path d="M503.4,292.08 L503.4,297.28 L507.4,294.68Z" fill="#444"/><rect x="512.6" y="289.48" width="10.6" height="10.4" fill="#fff" stroke="#444" stroke-width=".7"/><polygon points="517.90,290.48 518.94,293.25 521.89,293.38 519.58,295.23 520.37,298.08 517.90,296.44 515.43,298.08 516.22,295.23 513.91,293.38 516.86,293.25" fill="#4b2f9e"/><text x="527" y="296.88" font-size="6.2" fill="#222" font-weight="normal" text-anchor="start" >&lt;Group&gt;</text><circle cx="591.8" cy="294.68" r="2.7" fill="#fff" stroke="#333" stroke-width=".8"/><line x1="460.4" y1="301.27" x2="604.4" y2="301.27" stroke="#9c9c9c" stroke-width="0.7" /><rect x="462.2" y="302.47" width="10.6" height="10.98" fill="#cdcdcd" stroke="#8a8a8a" stroke-width=".5"/><path d="M463.4,307.86 C465,304.66 469.8,304.66 471.6,307.86 C469.8,310.66 465,310.66 463.4,307.86Z" fill="#2a2a2a"/><circle cx="467.6" cy="307.26" r="1.1" fill="#ddd"/><rect x="475" y="302.67" width="10.4" height="10.58" fill="#e4e4e4" stroke="#aaa" stroke-width=".5"/><rect x="487.2" y="302.07" width="2.4" height="11.78" fill="#1ff4f4" /><path d="M503.4,305.26 L503.4,310.46 L507.4,307.86Z" fill="#444"/><rect x="512.6" y="302.66" width="10.6" height="10.4" fill="#fff" stroke="#444" stroke-width=".7"/><polygon points="517.90,303.66 518.94,306.43 521.89,306.56 519.58,308.41 520.37,311.26 517.90,309.62 515.43,311.26 516.22,308.41 513.91,306.56 516.86,306.43" fill="#4b2f9e"/><text x="527" y="310.06" font-size="6.2" fill="#222" font-weight="normal" text-anchor="start" >&lt;Group&gt;</text><circle cx="591.8" cy="307.86" r="2.7" fill="#fff" stroke="#333" stroke-width=".8"/><line x1="460.4" y1="314.45" x2="604.4" y2="314.45" stroke="#9c9c9c" stroke-width="0.7" /><rect x="462.2" y="315.65" width="10.6" height="10.98" fill="#cdcdcd" stroke="#8a8a8a" stroke-width=".5"/><path d="M463.4,321.04 C465,317.84 469.8,317.84 471.6,321.04 C469.8,323.84 465,323.84 463.4,321.04Z" fill="#2a2a2a"/><circle cx="467.6" cy="320.44" r="1.1" fill="#ddd"/><rect x="475" y="315.85" width="10.4" height="10.58" fill="#e4e4e4" stroke="#aaa" stroke-width=".5"/><rect x="487.2" y="315.25" width="2.4" height="11.78" fill="#1ff4f4" /><path d="M503.4,318.44 L503.4,323.64 L507.4,321.04Z" fill="#444"/><rect x="512.6" y="315.84" width="10.6" height="10.4" fill="#fff" stroke="#444" stroke-width=".7"/><polygon points="517.90,316.84 518.94,319.61 521.89,319.74 519.58,321.59 520.37,324.44 517.90,322.80 515.43,324.44 516.22,321.59 513.91,319.74 516.86,319.61" fill="#4b2f9e"/><text x="527" y="323.24" font-size="6.2" fill="#222" font-weight="normal" text-anchor="start" >&lt;Group&gt;</text><circle cx="591.8" cy="321.04" r="2.7" fill="#fff" stroke="#333" stroke-width=".8"/><line x1="460.4" y1="327.63" x2="604.4" y2="327.63" stroke="#9c9c9c" stroke-width="0.7" /><rect x="462.2" y="328.83" width="10.6" height="10.98" fill="#cdcdcd" stroke="#8a8a8a" stroke-width=".5"/><path d="M463.4,334.22 C465,331.02 469.8,331.02 471.6,334.22 C469.8,337.02 465,337.02 463.4,334.22Z" fill="#2a2a2a"/><circle cx="467.6" cy="333.62" r="1.1" fill="#ddd"/><rect x="475" y="329.03" width="10.4" height="10.58" fill="#e4e4e4" stroke="#aaa" stroke-width=".5"/><rect x="487.2" y="328.43" width="2.4" height="11.78" fill="#1ff4f4" /><path d="M503.4,331.62 L503.4,336.82 L507.4,334.22Z" fill="#444"/><rect x="512.6" y="329.02" width="10.6" height="10.4" fill="#fff" stroke="#444" stroke-width=".7"/><polygon points="517.90,330.02 518.94,332.79 521.89,332.92 519.58,334.77 520.37,337.62 517.90,335.98 515.43,337.62 516.22,334.77 513.91,332.92 516.86,332.79" fill="#4b2f9e"/><text x="527" y="336.42" font-size="6.2" fill="#222" font-weight="normal" text-anchor="start" >&lt;Group&gt;</text><circle cx="591.8" cy="334.22" r="2.7" fill="#fff" stroke="#333" stroke-width=".8"/><line x1="460.4" y1="340.81" x2="604.4" y2="340.81" stroke="#9c9c9c" stroke-width="0.7" /><rect x="462.2" y="342.01" width="10.6" height="10.98" fill="#cdcdcd" stroke="#8a8a8a" stroke-width=".5"/><path d="M463.4,347.40 C465,344.20 469.8,344.20 471.6,347.40 C469.8,350.20 465,350.20 463.4,347.40Z" fill="#2a2a2a"/><circle cx="467.6" cy="346.80" r="1.1" fill="#ddd"/><rect x="475" y="342.21" width="10.4" height="10.58" fill="#e4e4e4" stroke="#aaa" stroke-width=".5"/><rect x="487.2" y="341.61" width="2.4" height="11.78" fill="#1ff4f4" /><path d="M503.4,344.80 L503.4,350.00 L507.4,347.40Z" fill="#444"/><rect x="512.6" y="342.20" width="10.6" height="10.4" fill="#fff" stroke="#444" stroke-width=".7"/><polygon points="517.90,343.20 518.94,345.97 521.89,346.10 519.58,347.95 520.37,350.80 517.90,349.16 515.43,350.80 516.22,347.95 513.91,346.10 516.86,345.97" fill="#4b2f9e"/><text x="527" y="349.60" font-size="6.2" fill="#222" font-weight="normal" text-anchor="start" >&lt;Group&gt;</text><circle cx="591.8" cy="347.40" r="2.7" fill="#fff" stroke="#333" stroke-width=".8"/><line x1="460.4" y1="353.99" x2="604.4" y2="353.99" stroke="#9c9c9c" stroke-width="0.7" /><rect x="462.2" y="355.19" width="10.6" height="10.98" fill="#cdcdcd" stroke="#8a8a8a" stroke-width=".5"/><path d="M463.4,360.58 C465,357.38 469.8,357.38 471.6,360.58 C469.8,363.38 465,363.38 463.4,360.58Z" fill="#2a2a2a"/><circle cx="467.6" cy="359.98" r="1.1" fill="#ddd"/><rect x="475" y="355.39" width="10.4" height="10.58" fill="#e4e4e4" stroke="#aaa" stroke-width=".5"/><rect x="487.2" y="354.79" width="2.4" height="11.78" fill="#1ff4f4" /><path d="M503.4,357.98 L503.4,363.18 L507.4,360.58Z" fill="#444"/><rect x="512.6" y="355.38" width="10.6" height="10.4" fill="#fff" stroke="#444" stroke-width=".7"/><polygon points="517.90,356.38 518.94,359.15 521.89,359.28 519.58,361.13 520.37,363.98 517.90,362.34 515.43,363.98 516.22,361.13 513.91,359.28 516.86,359.15" fill="#4b2f9e"/><text x="527" y="362.78" font-size="6.2" fill="#222" font-weight="normal" text-anchor="start" >&lt;Group&gt;</text><circle cx="591.8" cy="360.58" r="2.7" fill="#fff" stroke="#333" stroke-width=".8"/><line x1="460.4" y1="367.17" x2="604.4" y2="367.17" stroke="#9c9c9c" stroke-width="0.7" /><rect x="462.2" y="368.37" width="10.6" height="10.98" fill="#cdcdcd" stroke="#8a8a8a" stroke-width=".5"/><path d="M463.4,373.76 C465,370.56 469.8,370.56 471.6,373.76 C469.8,376.56 465,376.56 463.4,373.76Z" fill="#2a2a2a"/><circle cx="467.6" cy="373.16" r="1.1" fill="#ddd"/><rect x="475" y="368.57" width="10.4" height="10.58" fill="#e4e4e4" stroke="#aaa" stroke-width=".5"/><rect x="487.2" y="367.97" width="2.4" height="11.78" fill="#1ff4f4" /><path d="M503.4,371.16 L503.4,376.36 L507.4,373.76Z" fill="#444"/><rect x="512.6" y="368.56" width="10.6" height="10.4" fill="#fff" stroke="#444" stroke-width=".7"/><polygon points="517.90,369.56 518.94,372.33 521.89,372.46 519.58,374.31 520.37,377.16 517.90,375.52 515.43,377.16 516.22,374.31 513.91,372.46 516.86,372.33" fill="#4b2f9e"/><text x="527" y="375.96" font-size="6.2" fill="#222" font-weight="normal" text-anchor="start" >&lt;Group&gt;</text><circle cx="591.8" cy="373.76" r="2.7" fill="#fff" stroke="#333" stroke-width=".8"/><line x1="460.4" y1="380.35" x2="604.4" y2="380.35" stroke="#9c9c9c" stroke-width="0.7" /><rect x="462.2" y="381.55" width="10.6" height="10.98" fill="#cdcdcd" stroke="#8a8a8a" stroke-width=".5"/><path d="M463.4,386.94 C465,383.74 469.8,383.74 471.6,386.94 C469.8,389.74 465,389.74 463.4,386.94Z" fill="#2a2a2a"/><circle cx="467.6" cy="386.34" r="1.1" fill="#ddd"/><rect x="475" y="381.75" width="10.4" height="10.58" fill="#e4e4e4" stroke="#aaa" stroke-width=".5"/><rect x="487.2" y="381.15" width="2.4" height="11.78" fill="#1ff4f4" /><path d="M503.4,384.34 L503.4,389.54 L507.4,386.94Z" fill="#444"/><rect x="512.6" y="381.74" width="10.6" height="10.4" fill="#fff" stroke="#444" stroke-width=".7"/><polygon points="517.90,382.74 518.94,385.51 521.89,385.64 519.58,387.49 520.37,390.34 517.90,388.70 515.43,390.34 516.22,387.49 513.91,385.64 516.86,385.51" fill="#4b2f9e"/><text x="527" y="389.14" font-size="6.2" fill="#222" font-weight="normal" text-anchor="start" >&lt;Group&gt;</text><circle cx="591.8" cy="386.94" r="2.7" fill="#fff" stroke="#333" stroke-width=".8"/><line x1="460.4" y1="393.53" x2="604.4" y2="393.53" stroke="#9c9c9c" stroke-width="0.7" /><rect x="462.2" y="394.73" width="10.6" height="10.98" fill="#cdcdcd" stroke="#8a8a8a" stroke-width=".5"/><path d="M463.4,400.12 C465,396.92 469.8,396.92 471.6,400.12 C469.8,402.92 465,402.92 463.4,400.12Z" fill="#2a2a2a"/><circle cx="467.6" cy="399.52" r="1.1" fill="#ddd"/><rect x="475" y="394.93" width="10.4" height="10.58" fill="#e4e4e4" stroke="#aaa" stroke-width=".5"/><rect x="487.2" y="394.33" width="2.4" height="11.78" fill="#1ff4f4" /><path d="M503.4,397.52 L503.4,402.72 L507.4,400.12Z" fill="#444"/><rect x="512.6" y="394.92" width="10.6" height="10.4" fill="#fff" stroke="#444" stroke-width=".7"/><polygon points="517.90,395.92 518.94,398.69 521.89,398.82 519.58,400.67 520.37,403.52 517.90,401.88 515.43,403.52 516.22,400.67 513.91,398.82 516.86,398.69" fill="#4b2f9e"/><text x="527" y="402.32" font-size="6.2" fill="#222" font-weight="normal" text-anchor="start" >&lt;Group&gt;</text><circle cx="591.8" cy="400.12" r="2.7" fill="#fff" stroke="#333" stroke-width=".8"/><line x1="460.4" y1="406.71" x2="604.4" y2="406.71" stroke="#9c9c9c" stroke-width="0.7" /><rect x="462.2" y="407.91" width="10.6" height="10.98" fill="#cdcdcd" stroke="#8a8a8a" stroke-width=".5"/><path d="M463.4,413.30 C465,410.10 469.8,410.10 471.6,413.30 C469.8,416.10 465,416.10 463.4,413.30Z" fill="#2a2a2a"/><circle cx="467.6" cy="412.70" r="1.1" fill="#ddd"/><rect x="475" y="408.11" width="10.4" height="10.58" fill="#e4e4e4" stroke="#aaa" stroke-width=".5"/><rect x="487.2" y="407.51" width="2.4" height="11.78" fill="#1ff4f4" /><path d="M503.4,410.70 L503.4,415.90 L507.4,413.30Z" fill="#444"/><rect x="512.6" y="408.10" width="10.6" height="10.4" fill="#fff" stroke="#444" stroke-width=".7"/><polygon points="517.90,409.10 518.94,411.87 521.89,412.00 519.58,413.85 520.37,416.70 517.90,415.06 515.43,416.70 516.22,413.85 513.91,412.00 516.86,411.87" fill="#4b2f9e"/><text x="527" y="415.50" font-size="6.2" fill="#222" font-weight="normal" text-anchor="start" >&lt;Group&gt;</text><circle cx="591.8" cy="413.30" r="2.7" fill="#fff" stroke="#333" stroke-width=".8"/><line x1="460.4" y1="419.89" x2="604.4" y2="419.89" stroke="#9c9c9c" stroke-width="0.7" /><rect x="462.2" y="421.09" width="10.6" height="10.98" fill="#cdcdcd" stroke="#8a8a8a" stroke-width=".5"/><path d="M463.4,426.48 C465,423.28 469.8,423.28 471.6,426.48 C469.8,429.28 465,429.28 463.4,426.48Z" fill="#2a2a2a"/><circle cx="467.6" cy="425.88" r="1.1" fill="#ddd"/><rect x="475" y="421.29" width="10.4" height="10.58" fill="#e4e4e4" stroke="#aaa" stroke-width=".5"/><rect x="487.2" y="420.69" width="2.4" height="11.78" fill="#1ff4f4" /><path d="M503.4,423.88 L503.4,429.08 L507.4,426.48Z" fill="#444"/><rect x="512.6" y="421.28" width="10.6" height="10.4" fill="#fff" stroke="#444" stroke-width=".7"/><polygon points="517.90,422.28 518.94,425.05 521.89,425.18 519.58,427.03 520.37,429.88 517.90,428.24 515.43,429.88 516.22,427.03 513.91,425.18 516.86,425.05" fill="#4b2f9e"/><text x="527" y="428.68" font-size="6.2" fill="#222" font-weight="normal" text-anchor="start" >&lt;Group&gt;</text><circle cx="591.8" cy="426.48" r="2.7" fill="#fff" stroke="#333" stroke-width=".8"/><line x1="460.4" y1="433.07" x2="604.4" y2="433.07" stroke="#9c9c9c" stroke-width="0.7" /><rect x="462.2" y="434.27" width="10.6" height="10.98" fill="#cdcdcd" stroke="#8a8a8a" stroke-width=".5"/><path d="M463.4,439.66 C465,436.46 469.8,436.46 471.6,439.66 C469.8,442.46 465,442.46 463.4,439.66Z" fill="#2a2a2a"/><circle cx="467.6" cy="439.06" r="1.1" fill="#ddd"/><rect x="475" y="434.47" width="10.4" height="10.58" fill="#e4e4e4" stroke="#aaa" stroke-width=".5"/><rect x="487.2" y="433.87" width="2.4" height="11.78" fill="#1ff4f4" /><path d="M503.4,437.06 L503.4,442.26 L507.4,439.66Z" fill="#444"/><rect x="512.6" y="434.46" width="10.6" height="10.4" fill="#fff" stroke="#444" stroke-width=".7"/><polygon points="517.90,435.46 518.94,438.23 521.89,438.36 519.58,440.21 520.37,443.06 517.90,441.42 515.43,443.06 516.22,440.21 513.91,438.36 516.86,438.23" fill="#4b2f9e"/><text x="527" y="441.86" font-size="6.2" fill="#222" font-weight="normal" text-anchor="start" >&lt;Group&gt;</text><circle cx="591.8" cy="439.66" r="2.7" fill="#fff" stroke="#333" stroke-width=".8"/><line x1="460.4" y1="446.25" x2="604.4" y2="446.25" stroke="#9c9c9c" stroke-width="0.7" /><rect x="462.2" y="447.45" width="10.6" height="10.98" fill="#cdcdcd" stroke="#8a8a8a" stroke-width=".5"/><path d="M463.4,452.84 C465,449.64 469.8,449.64 471.6,452.84 C469.8,455.64 465,455.64 463.4,452.84Z" fill="#2a2a2a"/><circle cx="467.6" cy="452.24" r="1.1" fill="#ddd"/><rect x="475" y="447.65" width="10.4" height="10.58" fill="#e4e4e4" stroke="#aaa" stroke-width=".5"/><rect x="487.2" y="447.05" width="2.4" height="11.78" fill="#1ff4f4" /><path d="M503.4,450.24 L503.4,455.44 L507.4,452.84Z" fill="#444"/><rect x="512.6" y="447.64" width="10.6" height="10.4" fill="#fff" stroke="#444" stroke-width=".7"/><polygon points="517.90,448.64 518.94,451.41 521.89,451.54 519.58,453.39 520.37,456.24 517.90,454.60 515.43,456.24 516.22,453.39 513.91,451.54 516.86,451.41" fill="#4b2f9e"/><text x="527" y="455.04" font-size="6.2" fill="#222" font-weight="normal" text-anchor="start" >&lt;Group&gt;</text><circle cx="591.8" cy="452.84" r="2.7" fill="#fff" stroke="#333" stroke-width=".8"/><line x1="460.4" y1="459.43" x2="604.4" y2="459.43" stroke="#9c9c9c" stroke-width="0.7" /><rect x="462.2" y="460.63" width="10.6" height="10.98" fill="#cdcdcd" stroke="#8a8a8a" stroke-width=".5"/><path d="M463.4,466.02 C465,462.82 469.8,462.82 471.6,466.02 C469.8,468.82 465,468.82 463.4,466.02Z" fill="#2a2a2a"/><circle cx="467.6" cy="465.42" r="1.1" fill="#ddd"/><rect x="475" y="460.83" width="10.4" height="10.58" fill="#e4e4e4" stroke="#aaa" stroke-width=".5"/><rect x="487.2" y="460.23" width="2.4" height="11.78" fill="#1ff4f4" /><path d="M503.4,463.42 L503.4,468.62 L507.4,466.02Z" fill="#444"/><rect x="512.6" y="460.82" width="10.6" height="10.4" fill="#fff" stroke="#444" stroke-width=".7"/><polygon points="517.90,461.82 518.94,464.59 521.89,464.72 519.58,466.57 520.37,469.42 517.90,467.78 515.43,469.42 516.22,466.57 513.91,464.72 516.86,464.59" fill="#4b2f9e"/><text x="527" y="468.22" font-size="6.2" fill="#222" font-weight="normal" text-anchor="start" >&lt;Group&gt;</text><circle cx="591.8" cy="466.02" r="2.7" fill="#fff" stroke="#333" stroke-width=".8"/><line x1="460.4" y1="472.61" x2="604.4" y2="472.61" stroke="#9c9c9c" stroke-width="0.7" /><rect x="462.2" y="473.81" width="10.6" height="10.98" fill="#cdcdcd" stroke="#8a8a8a" stroke-width=".5"/><path d="M463.4,479.20 C465,476.00 469.8,476.00 471.6,479.20 C469.8,482.00 465,482.00 463.4,479.20Z" fill="#2a2a2a"/><circle cx="467.6" cy="478.60" r="1.1" fill="#ddd"/><rect x="475" y="474.01" width="10.4" height="10.58" fill="#e4e4e4" stroke="#aaa" stroke-width=".5"/><rect x="487.2" y="473.41" width="2.4" height="11.78" fill="#1ff4f4" /><path d="M503.4,476.60 L503.4,481.80 L507.4,479.20Z" fill="#444"/><rect x="512.6" y="474.00" width="10.6" height="10.4" fill="#fff" stroke="#444" stroke-width=".7"/><polygon points="517.90,475.00 518.94,477.77 521.89,477.90 519.58,479.75 520.37,482.60 517.90,480.96 515.43,482.60 516.22,479.75 513.91,477.90 516.86,477.77" fill="#4b2f9e"/><text x="527" y="481.40" font-size="6.2" fill="#222" font-weight="normal" text-anchor="start" >&lt;Group&gt;</text><circle cx="591.8" cy="479.20" r="2.7" fill="#fff" stroke="#333" stroke-width=".8"/><line x1="460.4" y1="485.79" x2="604.4" y2="485.79" stroke="#9c9c9c" stroke-width="0.7" /><rect x="462.2" y="486.99" width="10.6" height="10.98" fill="#cdcdcd" stroke="#8a8a8a" stroke-width=".5"/><path d="M463.4,492.38 C465,489.18 469.8,489.18 471.6,492.38 C469.8,495.18 465,495.18 463.4,492.38Z" fill="#2a2a2a"/><circle cx="467.6" cy="491.78" r="1.1" fill="#ddd"/><rect x="475" y="487.19" width="10.4" height="10.58" fill="#e4e4e4" stroke="#aaa" stroke-width=".5"/><rect x="487.2" y="486.59" width="2.4" height="11.78" fill="#1ff4f4" /><path d="M503.4,489.78 L503.4,494.98 L507.4,492.38Z" fill="#444"/><rect x="512.6" y="487.18" width="10.6" height="10.4" fill="#fff" stroke="#444" stroke-width=".7"/><polygon points="517.90,488.18 518.94,490.95 521.89,491.08 519.58,492.93 520.37,495.78 517.90,494.14 515.43,495.78 516.22,492.93 513.91,491.08 516.86,490.95" fill="#4b2f9e"/><text x="527" y="494.58" font-size="6.2" fill="#222" font-weight="normal" text-anchor="start" >&lt;Group&gt;</text><circle cx="591.8" cy="492.38" r="2.7" fill="#fff" stroke="#333" stroke-width=".8"/><line x1="460.4" y1="498.97" x2="604.4" y2="498.97" stroke="#9c9c9c" stroke-width="0.7" /><rect x="462.2" y="500.17" width="10.6" height="10.98" fill="#cdcdcd" stroke="#8a8a8a" stroke-width=".5"/><path d="M463.4,505.56 C465,502.36 469.8,502.36 471.6,505.56 C469.8,508.36 465,508.36 463.4,505.56Z" fill="#2a2a2a"/><circle cx="467.6" cy="504.96" r="1.1" fill="#ddd"/><rect x="475" y="500.37" width="10.4" height="10.58" fill="#e4e4e4" stroke="#aaa" stroke-width=".5"/><rect x="487.2" y="499.77" width="2.4" height="11.78" fill="#1ff4f4" /><path d="M503.4,502.96 L503.4,508.16 L507.4,505.56Z" fill="#444"/><rect x="512.6" y="500.36" width="10.6" height="10.4" fill="#fff" stroke="#444" stroke-width=".7"/><polygon points="517.90,501.36 518.94,504.13 521.89,504.26 519.58,506.11 520.37,508.96 517.90,507.32 515.43,508.96 516.22,506.11 513.91,504.26 516.86,504.13" fill="#4b2f9e"/><text x="527" y="507.76" font-size="6.2" fill="#222" font-weight="normal" text-anchor="start" >&lt;Group&gt;</text><circle cx="591.8" cy="505.56" r="2.7" fill="#fff" stroke="#333" stroke-width=".8"/><line x1="460.4" y1="512.15" x2="604.4" y2="512.15" stroke="#9c9c9c" stroke-width="0.7" /><rect x="462.2" y="513.35" width="10.6" height="10.98" fill="#cdcdcd" stroke="#8a8a8a" stroke-width=".5"/><path d="M463.4,518.74 C465,515.54 469.8,515.54 471.6,518.74 C469.8,521.54 465,521.54 463.4,518.74Z" fill="#2a2a2a"/><circle cx="467.6" cy="518.14" r="1.1" fill="#ddd"/><rect x="475" y="513.55" width="10.4" height="10.58" fill="#e4e4e4" stroke="#aaa" stroke-width=".5"/><rect x="487.2" y="512.95" width="2.4" height="11.78" fill="#1ff4f4" /><path d="M503.4,516.14 L503.4,521.34 L507.4,518.74Z" fill="#444"/><rect x="512.6" y="513.54" width="10.6" height="10.4" fill="#fff" stroke="#444" stroke-width=".7"/><polygon points="517.90,514.54 518.94,517.31 521.89,517.44 519.58,519.29 520.37,522.14 517.90,520.50 515.43,522.14 516.22,519.29 513.91,517.44 516.86,517.31" fill="#4b2f9e"/><text x="527" y="520.94" font-size="6.2" fill="#222" font-weight="normal" text-anchor="start" >&lt;Group&gt;</text><circle cx="591.8" cy="518.74" r="2.7" fill="#fff" stroke="#333" stroke-width=".8"/><line x1="460.4" y1="525.33" x2="604.4" y2="525.33" stroke="#9c9c9c" stroke-width="0.7" /><rect x="462.2" y="526.53" width="10.6" height="10.98" fill="#cdcdcd" stroke="#8a8a8a" stroke-width=".5"/><path d="M463.4,531.92 C465,528.72 469.8,528.72 471.6,531.92 C469.8,534.72 465,534.72 463.4,531.92Z" fill="#2a2a2a"/><circle cx="467.6" cy="531.32" r="1.1" fill="#ddd"/><rect x="475" y="526.73" width="10.4" height="10.58" fill="#e4e4e4" stroke="#aaa" stroke-width=".5"/><rect x="487.2" y="526.13" width="2.4" height="11.78" fill="#1ff4f4" /><path d="M503.4,529.32 L503.4,534.52 L507.4,531.92Z" fill="#444"/><rect x="512.6" y="526.72" width="10.6" height="10.4" fill="#fff" stroke="#444" stroke-width=".7"/><polygon points="517.90,527.72 518.94,530.49 521.89,530.62 519.58,532.47 520.37,535.32 517.90,533.68 515.43,535.32 516.22,532.47 513.91,530.62 516.86,530.49" fill="#4b2f9e"/><text x="527" y="534.12" font-size="6.2" fill="#222" font-weight="normal" text-anchor="start" >&lt;Group&gt;</text><circle cx="591.8" cy="531.92" r="2.7" fill="#fff" stroke="#333" stroke-width=".8"/><line x1="460.4" y1="538.51" x2="604.4" y2="538.51" stroke="#9c9c9c" stroke-width="0.7" /><rect x="462.2" y="539.71" width="10.6" height="10.98" fill="#cdcdcd" stroke="#8a8a8a" stroke-width=".5"/><path d="M463.4,545.10 C465,541.90 469.8,541.90 471.6,545.10 C469.8,547.90 465,547.90 463.4,545.10Z" fill="#2a2a2a"/><circle cx="467.6" cy="544.50" r="1.1" fill="#ddd"/><rect x="475" y="539.91" width="10.4" height="10.58" fill="#e4e4e4" stroke="#aaa" stroke-width=".5"/><rect x="487.2" y="539.31" width="2.4" height="11.78" fill="#1ff4f4" /><path d="M503.4,542.50 L503.4,547.70 L507.4,545.10Z" fill="#444"/><rect x="512.6" y="539.90" width="10.6" height="10.4" fill="#fff" stroke="#444" stroke-width=".7"/><polygon points="517.90,540.90 518.94,543.67 521.89,543.80 519.58,545.65 520.37,548.50 517.90,546.86 515.43,548.50 516.22,545.65 513.91,543.80 516.86,543.67" fill="#4b2f9e"/><text x="527" y="547.30" font-size="6.2" fill="#222" font-weight="normal" text-anchor="start" >&lt;Group&gt;</text><circle cx="591.8" cy="545.10" r="2.7" fill="#fff" stroke="#333" stroke-width=".8"/><line x1="460.4" y1="551.69" x2="604.4" y2="551.69" stroke="#9c9c9c" stroke-width="0.7" /><rect x="462.2" y="552.89" width="10.6" height="10.98" fill="#cdcdcd" stroke="#8a8a8a" stroke-width=".5"/><path d="M463.4,558.28 C465,555.08 469.8,555.08 471.6,558.28 C469.8,561.08 465,561.08 463.4,558.28Z" fill="#2a2a2a"/><circle cx="467.6" cy="557.68" r="1.1" fill="#ddd"/><rect x="475" y="553.09" width="10.4" height="10.58" fill="#e4e4e4" stroke="#aaa" stroke-width=".5"/><rect x="487.2" y="552.49" width="2.4" height="11.78" fill="#1ff4f4" /><path d="M503.4,555.68 L503.4,560.88 L507.4,558.28Z" fill="#444"/><rect x="512.6" y="553.08" width="10.6" height="10.4" fill="#fff" stroke="#444" stroke-width=".7"/><polygon points="517.90,554.08 518.94,556.85 521.89,556.98 519.58,558.83 520.37,561.68 517.90,560.04 515.43,561.68 516.22,558.83 513.91,556.98 516.86,556.85" fill="#4b2f9e"/><text x="527" y="560.48" font-size="6.2" fill="#222" font-weight="normal" text-anchor="start" >&lt;Group&gt;</text><circle cx="591.8" cy="558.28" r="2.7" fill="#fff" stroke="#333" stroke-width=".8"/><line x1="460.4" y1="564.87" x2="604.4" y2="564.87" stroke="#9c9c9c" stroke-width="0.7" /><rect x="462.2" y="566.07" width="10.6" height="10.98" fill="#cdcdcd" stroke="#8a8a8a" stroke-width=".5"/><path d="M463.4,571.46 C465,568.26 469.8,568.26 471.6,571.46 C469.8,574.26 465,574.26 463.4,571.46Z" fill="#2a2a2a"/><circle cx="467.6" cy="570.86" r="1.1" fill="#ddd"/><rect x="475" y="566.27" width="10.4" height="10.58" fill="#e4e4e4" stroke="#aaa" stroke-width=".5"/><rect x="487.2" y="565.67" width="2.4" height="11.78" fill="#1ff4f4" /><path d="M503.4,568.86 L503.4,574.06 L507.4,571.46Z" fill="#444"/><rect x="512.6" y="566.26" width="10.6" height="10.4" fill="#fff" stroke="#444" stroke-width=".7"/><polygon points="517.90,567.26 518.94,570.03 521.89,570.16 519.58,572.01 520.37,574.86 517.90,573.22 515.43,574.86 516.22,572.01 513.91,570.16 516.86,570.03" fill="#4b2f9e"/><text x="527" y="573.66" font-size="6.2" fill="#222" font-weight="normal" text-anchor="start" >&lt;Group&gt;</text><circle cx="591.8" cy="571.46" r="2.7" fill="#fff" stroke="#333" stroke-width=".8"/><line x1="460.4" y1="578.05" x2="604.4" y2="578.05" stroke="#9c9c9c" stroke-width="0.7" /><rect x="462.2" y="579.25" width="10.6" height="10.98" fill="#cdcdcd" stroke="#8a8a8a" stroke-width=".5"/><path d="M463.4,584.64 C465,581.44 469.8,581.44 471.6,584.64 C469.8,587.44 465,587.44 463.4,584.64Z" fill="#2a2a2a"/><circle cx="467.6" cy="584.04" r="1.1" fill="#ddd"/><rect x="475" y="579.45" width="10.4" height="10.58" fill="#e4e4e4" stroke="#aaa" stroke-width=".5"/><rect x="487.2" y="578.85" width="2.4" height="11.78" fill="#1ff4f4" /><path d="M503.4,582.04 L503.4,587.24 L507.4,584.64Z" fill="#444"/><rect x="512.6" y="579.44" width="10.6" height="10.4" fill="#fff" stroke="#444" stroke-width=".7"/><polygon points="517.90,580.44 518.94,583.21 521.89,583.34 519.58,585.19 520.37,588.04 517.90,586.40 515.43,588.04 516.22,585.19 513.91,583.34 516.86,583.21" fill="#4b2f9e"/><text x="527" y="586.84" font-size="6.2" fill="#222" font-weight="normal" text-anchor="start" >&lt;Group&gt;</text><circle cx="591.8" cy="584.64" r="2.7" fill="#fff" stroke="#333" stroke-width=".8"/><line x1="460.4" y1="591.23" x2="604.4" y2="591.23" stroke="#9c9c9c" stroke-width="0.7" /><rect x="462.2" y="592.43" width="10.6" height="10.98" fill="#cdcdcd" stroke="#8a8a8a" stroke-width=".5"/><path d="M463.4,597.82 C465,594.62 469.8,594.62 471.6,597.82 C469.8,600.62 465,600.62 463.4,597.82Z" fill="#2a2a2a"/><circle cx="467.6" cy="597.22" r="1.1" fill="#ddd"/><rect x="475" y="592.63" width="10.4" height="10.58" fill="#e4e4e4" stroke="#aaa" stroke-width=".5"/><rect x="487.2" y="592.03" width="2.4" height="11.78" fill="#1ff4f4" /><path d="M503.4,595.22 L503.4,600.42 L507.4,597.82Z" fill="#444"/><rect x="512.6" y="592.62" width="10.6" height="10.4" fill="#fff" stroke="#444" stroke-width=".7"/><polygon points="517.90,593.62 518.94,596.39 521.89,596.52 519.58,598.37 520.37,601.22 517.90,599.58 515.43,601.22 516.22,598.37 513.91,596.52 516.86,596.39" fill="#4b2f9e"/><text x="527" y="600.02" font-size="6.2" fill="#222" font-weight="normal" text-anchor="start" >&lt;Group&gt;</text><circle cx="591.8" cy="597.82" r="2.7" fill="#fff" stroke="#333" stroke-width=".8"/><line x1="460.4" y1="604.41" x2="604.4" y2="604.41" stroke="#9c9c9c" stroke-width="0.7" /><rect x="462.2" y="605.61" width="10.6" height="10.98" fill="#cdcdcd" stroke="#8a8a8a" stroke-width=".5"/><path d="M463.4,611.00 C465,607.80 469.8,607.80 471.6,611.00 C469.8,613.80 465,613.80 463.4,611.00Z" fill="#2a2a2a"/><circle cx="467.6" cy="610.40" r="1.1" fill="#ddd"/><rect x="475" y="605.81" width="10.4" height="10.58" fill="#e4e4e4" stroke="#aaa" stroke-width=".5"/><rect x="487.2" y="605.21" width="2.4" height="11.78" fill="#1ff4f4" /><path d="M503.4,608.40 L503.4,613.60 L507.4,611.00Z" fill="#444"/><rect x="512.6" y="605.80" width="10.6" height="10.4" fill="#fff" stroke="#444" stroke-width=".7"/><polygon points="517.90,606.80 518.94,609.57 521.89,609.70 519.58,611.55 520.37,614.40 517.90,612.76 515.43,614.40 516.22,611.55 513.91,609.70 516.86,609.57" fill="#4b2f9e"/><text x="527" y="613.20" font-size="6.2" fill="#222" font-weight="normal" text-anchor="start" >&lt;Group&gt;</text><circle cx="591.8" cy="611.00" r="2.7" fill="#fff" stroke="#333" stroke-width=".8"/><line x1="460.4" y1="617.59" x2="604.4" y2="617.59" stroke="#9c9c9c" stroke-width="0.7" /><rect x="462.2" y="618.79" width="10.6" height="10.98" fill="#cdcdcd" stroke="#8a8a8a" stroke-width=".5"/><path d="M463.4,624.18 C465,620.98 469.8,620.98 471.6,624.18 C469.8,626.98 465,626.98 463.4,624.18Z" fill="#2a2a2a"/><circle cx="467.6" cy="623.58" r="1.1" fill="#ddd"/><rect x="475" y="618.99" width="10.4" height="10.58" fill="#e4e4e4" stroke="#aaa" stroke-width=".5"/><rect x="487.2" y="618.39" width="2.4" height="11.78" fill="#1ff4f4" /><path d="M503.4,621.58 L503.4,626.78 L507.4,624.18Z" fill="#444"/><rect x="512.6" y="618.98" width="10.6" height="10.4" fill="#fff" stroke="#444" stroke-width=".7"/><polygon points="517.90,619.98 518.94,622.75 521.89,622.88 519.58,624.73 520.37,627.58 517.90,625.94 515.43,627.58 516.22,624.73 513.91,622.88 516.86,622.75" fill="#4b2f9e"/><text x="527" y="626.38" font-size="6.2" fill="#222" font-weight="normal" text-anchor="start" >&lt;Group&gt;</text><circle cx="591.8" cy="624.18" r="2.7" fill="#fff" stroke="#333" stroke-width=".8"/><line x1="460.79999999999995" y1="260" x2="460.79999999999995" y2="618" stroke="#8c8c8c" stroke-width="0.9" /><line x1="615.4" y1="260" x2="615.4" y2="618" stroke="#6a6a6a" stroke-width="0.9" /><path d="M470.8,249.3 L599.7,249.3 L599.7,586.2 Q599.7,591.2 594.7,591.2 L475.8,591.2 Q470.8,591.2 470.8,586.2Z" fill="#ffffff" fill-opacity=".965" filter="url(#sh)" stroke="#00000022" stroke-width=".5"/><rect x="470.8" y="251.9" width="128.90000000000003" height="12" fill="url(#hl)" /><text x="484.3" y="261.4" font-size="9.6" fill="#fff" font-weight="normal" text-anchor="start" textLength="74" lengthAdjust="spacingAndGlyphs" stroke="#fff" stroke-width=".35">Save Swatches...</text><text x="484.6" y="281.00" font-size="9.6" fill="#111" font-weight="normal" text-anchor="start" textLength="48.6" lengthAdjust="spacingAndGlyphs">Art History</text><path d="M588.2,274.50 L588.2,280.50 L593,277.50Z" fill="#222"/><text x="484.6" y="293.53" font-size="9.6" fill="#111" font-weight="normal" text-anchor="start" textLength="51.4" lengthAdjust="spacingAndGlyphs">Celebration</text><text x="484.6" y="306.06" font-size="9.6" fill="#111" font-weight="normal" text-anchor="start" textLength="53.9" lengthAdjust="spacingAndGlyphs">Color Books</text><path d="M588.2,299.56 L588.2,305.56 L593,302.56Z" fill="#222"/><text x="484.6" y="318.59" font-size="9.6" fill="#111" font-weight="normal" text-anchor="start" textLength="72.3" lengthAdjust="spacingAndGlyphs">Color Properties</text><path d="M588.2,312.09 L588.2,318.09 L593,315.09Z" fill="#222"/><text x="484.6" y="331.12" font-size="9.6" fill="#111" font-weight="normal" text-anchor="start" textLength="44.6" lengthAdjust="spacingAndGlyphs">Corporate</text><text x="484.6" y="343.65" font-size="9.6" fill="#111" font-weight="normal" text-anchor="start" textLength="76.0" lengthAdjust="spacingAndGlyphs">Default Swatches</text><path d="M588.2,337.15 L588.2,343.15 L593,340.15Z" fill="#222"/><text x="484.6" y="356.18" font-size="9.6" fill="#111" font-weight="normal" text-anchor="start" textLength="43.1" lengthAdjust="spacingAndGlyphs">Earthtone</text><text x="484.6" y="368.71" font-size="9.6" fill="#111" font-weight="normal" text-anchor="start" textLength="26.8" lengthAdjust="spacingAndGlyphs">Foods</text><path d="M588.2,362.21 L588.2,368.21 L593,365.21Z" fill="#222"/><text x="484.6" y="381.24" font-size="9.6" fill="#111" font-weight="normal" text-anchor="start" textLength="43.1" lengthAdjust="spacingAndGlyphs">Gradients</text><path d="M588.2,374.74 L588.2,380.74 L593,377.74Z" fill="#222"/><text x="484.6" y="393.77" font-size="9.6" fill="#111" font-weight="normal" text-anchor="start" textLength="43.1" lengthAdjust="spacingAndGlyphs">Kids Stuff</text><text x="484.6" y="406.30" font-size="9.6" fill="#111" font-weight="normal" text-anchor="start" textLength="24.6" lengthAdjust="spacingAndGlyphs">Metal</text><text x="484.6" y="418.83" font-size="9.6" fill="#111" font-weight="normal" text-anchor="start" textLength="30.2" lengthAdjust="spacingAndGlyphs">Nature</text><path d="M588.2,412.33 L588.2,418.33 L593,415.33Z" fill="#222"/><text x="484.6" y="431.36" font-size="9.6" fill="#111" font-weight="normal" text-anchor="start" textLength="32.3" lengthAdjust="spacingAndGlyphs">Neutral</text><text x="484.6" y="443.89" font-size="9.6" fill="#111" font-weight="normal" text-anchor="start" textLength="35.5" lengthAdjust="spacingAndGlyphs">Patterns</text><path d="M588.2,437.39 L588.2,443.39 L593,440.39Z" fill="#222"/><text x="484.6" y="456.42" font-size="9.6" fill="#111" font-weight="normal" text-anchor="start" textLength="40.3" lengthAdjust="spacingAndGlyphs">Scientific</text><path d="M588.2,449.92 L588.2,455.92 L593,452.92Z" fill="#222"/><text x="484.6" y="468.95" font-size="9.6" fill="#111" font-weight="normal" text-anchor="start" textLength="42.9" lengthAdjust="spacingAndGlyphs">Skintones</text><text x="484.6" y="481.48" font-size="9.6" fill="#111" font-weight="normal" text-anchor="start" textLength="86.8" lengthAdjust="spacingAndGlyphs">System (Macintosh)</text><text x="484.6" y="494.01" font-size="9.6" fill="#111" font-weight="normal" text-anchor="start" textLength="80.4" lengthAdjust="spacingAndGlyphs">System (Windows)</text><text x="484.6" y="506.54" font-size="9.6" fill="#111" font-weight="normal" text-anchor="start" textLength="34.9" lengthAdjust="spacingAndGlyphs">Textiles</text><text x="484.6" y="519.07" font-size="9.6" fill="#111" font-weight="normal" text-anchor="start" textLength="42.9" lengthAdjust="spacingAndGlyphs">VisiBone2</text><text x="484.6" y="531.60" font-size="9.6" fill="#111" font-weight="normal" text-anchor="start" textLength="18.5" lengthAdjust="spacingAndGlyphs">Web</text><text x="484.6" y="544.13" font-size="9.6" fill="#111" font-weight="normal" text-anchor="start" textLength="57.3" lengthAdjust="spacingAndGlyphs">User Defined</text><path d="M588.2,537.63 L588.2,543.63 L593,540.63Z" fill="#222"/><line x1="470.8" y1="268.8" x2="599.7" y2="268.8" stroke="#e2e2e2" stroke-width="1" /><line x1="470.8" y1="551.3" x2="599.7" y2="551.3" stroke="#e2e2e2" stroke-width="1" /><line x1="470.8" y1="571.8" x2="599.7" y2="571.8" stroke="#e2e2e2" stroke-width="1" /><text x="484.6" y="564.6" font-size="9.6" fill="#111" font-weight="normal" text-anchor="start" textLength="34.9" lengthAdjust="spacingAndGlyphs">Tutorial</text><text x="484.6" y="585.2" font-size="9.6" fill="#111" font-weight="normal" text-anchor="start" textLength="67.6" lengthAdjust="spacingAndGlyphs">Other Library...</text></svg></body></html>
